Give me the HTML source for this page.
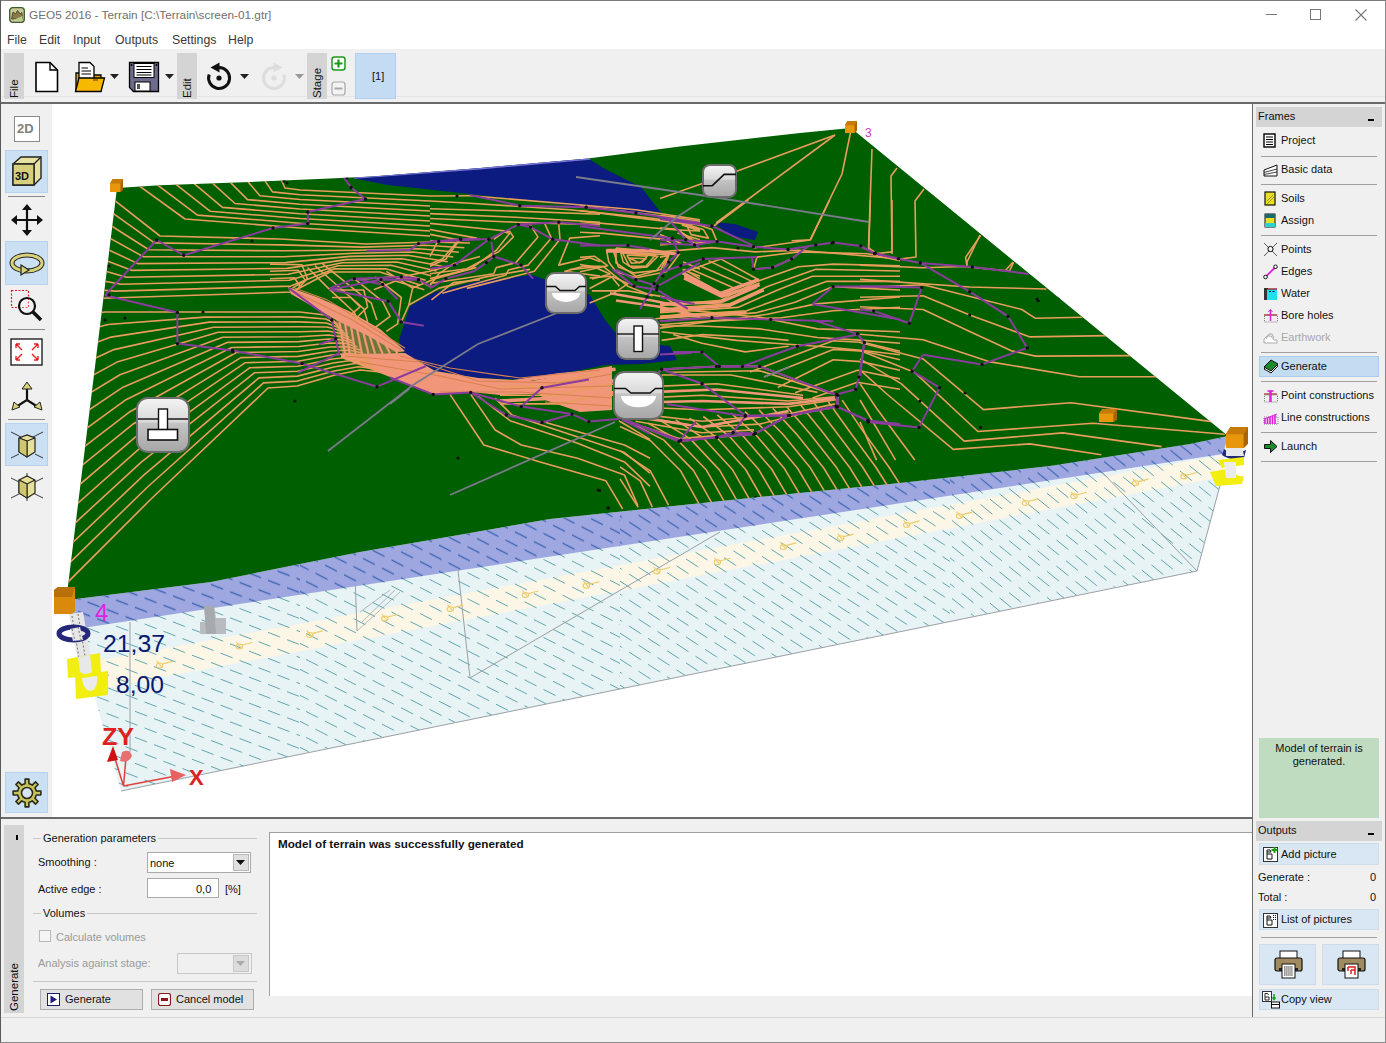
<!DOCTYPE html>
<html><head><meta charset="utf-8">
<style>
*{margin:0;padding:0;box-sizing:border-box}
html,body{width:1386px;height:1043px;overflow:hidden;background:#fff;font-family:"Liberation Sans",sans-serif;color:#000}
.a{position:absolute}
.t{position:absolute;white-space:nowrap;font-size:11px;line-height:13px}
#win{position:absolute;left:0;top:0;width:1386px;height:1043px;background:#f0f0f0;overflow:hidden}
.vtab{position:absolute;background:#d4d4d4}
.vt{position:absolute;transform:rotate(-90deg);transform-origin:0 0;font-size:11.5px;line-height:14px;white-space:nowrap;color:#111}
.pbtn{position:absolute;background:#d9e6f3;border:1px solid #cddcea}
</style></head><body>
<div id="win">
<div class="a" style="left:0;top:0;width:1386px;height:49px;background:#fff"></div>
<svg class="a" style="left:9px;top:7px" width="16" height="16" viewBox="0 0 16 16">
<rect x="0.7" y="0.7" width="14.6" height="14.6" rx="3" fill="#c9c79a" stroke="#3c5a2a" stroke-width="1.3"/>
<path d="M2.5 12 L4 5 L6.5 7 L8.5 3.5 L11 7 L13 5.5 L13.5 12 Z" fill="#8a7a4a" stroke="#3a3a20" stroke-width="0.8"/>
<path d="M4 13 L13.5 9 L13.5 13.5 L4 13.5Z" fill="#b8cc88"/>
</svg>
<div class="t" style="left:29px;top:8px;font-size:11.8px;line-height:14px;color:#707070">GEO5 2016 - Terrain [C:\Terrain\screen-01.gtr]</div>
<div class="t" style="left:7px;top:33px;font-size:12.3px;line-height:15px;color:#3a3a3a">File</div>
<div class="t" style="left:39px;top:33px;font-size:12.3px;line-height:15px;color:#3a3a3a">Edit</div>
<div class="t" style="left:73px;top:33px;font-size:12.3px;line-height:15px;color:#3a3a3a">Input</div>
<div class="t" style="left:115px;top:33px;font-size:12.3px;line-height:15px;color:#3a3a3a">Outputs</div>
<div class="t" style="left:172px;top:33px;font-size:12.3px;line-height:15px;color:#3a3a3a">Settings</div>
<div class="t" style="left:228px;top:33px;font-size:12.3px;line-height:15px;color:#3a3a3a">Help</div>
<div class="a" style="left:1266px;top:14px;width:11px;height:1px;background:#777"></div>
<div class="a" style="left:1310px;top:9px;width:11px;height:11px;border:1px solid #777"></div>
<svg class="a" style="left:1355px;top:9px" width="12" height="12"><path d="M0.5 0.5L11.5 11.5M11.5 0.5L0.5 11.5" stroke="#777" stroke-width="1.1"/></svg>
<div class="a" style="left:0;top:49px;width:1386px;height:54px;background:#f0f0f0"></div>
<div class="a" style="left:0;top:96px;width:1386px;height:1px;background:#e4e4e4"></div>
<div class="a" style="left:0;top:102px;width:1386px;height:2px;background:#6a6a6a"></div>
<div class="vtab" style="left:4px;top:53px;width:20px;height:46px"></div>
<div class="vt" style="left:7px;top:98px">File</div>
<div class="vtab" style="left:177px;top:53px;width:20px;height:46px"></div>
<div class="vt" style="left:180px;top:98px">Edit</div>
<div class="vtab" style="left:307px;top:53px;width:20px;height:46px"></div>
<div class="vt" style="left:310px;top:98px">Stage</div>
<svg class="a" style="left:34px;top:61px" width="26" height="32" viewBox="0 0 26 32">
<path d="M2 1.5 H16 L23.5 9 V30.5 H2 Z" fill="#fff" stroke="#000" stroke-width="1.6"/>
<path d="M16 1.5 V9 H23.5" fill="none" stroke="#000" stroke-width="1.4"/></svg>
<svg class="a" style="left:74px;top:61px" width="32" height="32" viewBox="0 0 32 32">
<path d="M2 12 H10 L12 14 H27 V30 H2 Z" fill="#e2a800" stroke="#000" stroke-width="1.3"/>
<path d="M5 1.5 H16 L20 5.5 V22 H5 Z" fill="#fff" stroke="#000" stroke-width="1.3"/>
<path d="M7.5 7 H14 M7.5 10 H17 M7.5 13 H17" stroke="#000" stroke-width="1.2"/>
<path d="M1.5 30.5 L5 17 H30.5 L27 30.5 Z" fill="#f9b800" stroke="#000" stroke-width="1.3"/>
<path d="M19 19 H24" stroke="#7a5a00" stroke-width="1.4"/>
</svg>
<svg class="a" style="left:110px;top:74px" width="10" height="6"><path d="M0 0H9L4.5 5Z" fill="#222"/></svg>
<svg class="a" style="left:128px;top:61px" width="32" height="32" viewBox="0 0 32 32">
<path d="M1.5 1.5 H30.5 V30.5 H5.5 L1.5 26.5 Z" fill="#6b6b8e" stroke="#000" stroke-width="1.3"/>
<rect x="6" y="2.5" width="20" height="14" fill="#fff" stroke="#000" stroke-width="1"/>
<path d="M8.5 5.5H23.5M8.5 8.5H23.5M8.5 11.5H23.5M8.5 14H23.5" stroke="#000" stroke-width="1.2"/>
<rect x="7" y="21" width="15" height="9" fill="#fff" stroke="#000" stroke-width="1"/>
<rect x="9" y="23" width="3" height="5" fill="#555"/>
<circle cx="3.5" cy="4" r="1" fill="#000"/><circle cx="28.5" cy="4" r="1" fill="#000"/>
</svg>
<svg class="a" style="left:165px;top:74px" width="10" height="6"><path d="M0 0H9L4.5 5Z" fill="#222"/></svg>
<svg class="a" style="left:203px;top:61px" width="32" height="32" viewBox="0 0 32 32">
<path d="M16 6.5 A10.5 10.5 0 1 1 6.2 13.5" fill="none" stroke="#111" stroke-width="3"/>
<path d="M7.5 6.5 L16.5 1.5 V11.5 Z" fill="#111"/>
<circle cx="16" cy="17" r="2.6" fill="#111"/>
</svg>
<svg class="a" style="left:240px;top:74px" width="10" height="6"><path d="M0 0H9L4.5 5Z" fill="#222"/></svg>
<svg class="a" style="left:258px;top:61px" width="32" height="32" viewBox="0 0 32 32" opacity="0.08">
<path d="M16 6.5 A10.5 10.5 0 1 0 25.8 13.5" fill="none" stroke="#111" stroke-width="3"/>
<path d="M24.5 6.5 L15.5 1.5 V11.5 Z" fill="#111"/>
<circle cx="16" cy="17" r="2.6" fill="#111"/>
</svg>
<svg class="a" style="left:295px;top:74px" width="10" height="6"><path d="M0 0H9L4.5 5Z" fill="#999"/></svg>
<svg class="a" style="left:331px;top:56px" width="16" height="16"><rect x="1" y="1" width="13" height="13" rx="2.5" fill="#fff" stroke="#1a9a1a" stroke-width="1.5"/><path d="M7.5 3.5V11.5M3.5 7.5H11.5" stroke="#1a9a1a" stroke-width="2.2"/></svg>
<svg class="a" style="left:331px;top:81px" width="16" height="16"><rect x="1" y="1" width="13" height="13" rx="2.5" fill="#f4f4f4" stroke="#a8a8a8" stroke-width="1.2"/><path d="M3.5 7.5H11.5" stroke="#a8a8a8" stroke-width="2"/></svg>
<div class="a" style="left:355px;top:53px;width:41px;height:46px;background:#c3dcf3;border:1px solid #b0d0ee"></div>
<div class="t" style="left:372px;top:70px;font-size:11px;color:#111">[1]</div>
<div class="a" style="left:1px;top:104px;width:51px;height:714px;background:#f0f0f0"></div>
<div class="a" style="left:14px;top:116px;width:26px;height:26px;background:#fff;border:1px solid #8a8a8a"></div>
<div class="t" style="left:17px;top:122px;font-size:13px;line-height:14px;color:#808080;font-weight:bold">2D</div>
<div class="a" style="left:5px;top:150px;width:43px;height:43px;background:#cce0f4;border:1px solid #b6d2ee"></div>
<div class="a" style="left:5px;top:241px;width:43px;height:44px;background:#cce0f4;border:1px solid #b6d2ee"></div>
<div class="a" style="left:5px;top:423px;width:43px;height:43px;background:#cce0f4;border:1px solid #b6d2ee"></div>
<div class="a" style="left:5px;top:772px;width:43px;height:41px;background:#cce0f4;border:1px solid #b6d2ee"></div>
<div class="a" style="left:8px;top:196px;width:37px;height:1px;background:#8a8a8a"></div>
<div class="a" style="left:8px;top:329px;width:37px;height:1px;background:#8a8a8a"></div>
<div class="a" style="left:8px;top:419px;width:37px;height:1px;background:#8a8a8a"></div>
<svg class="a" style="left:10px;top:154px" width="34" height="34" viewBox="0 0 34 34">
<path d="M3 10 L11 3 H31 V24 L24 31 H3 Z" fill="#e8e2a0" stroke="#222" stroke-width="1.4"/>
<path d="M3 10 H24 V31 M24 10 L31 3" fill="none" stroke="#222" stroke-width="1.4"/>
<path d="M3 10 H24 V31 H3Z" fill="#d6cf7e" stroke="#222" stroke-width="1.4"/>
<text x="5" y="26" font-family="Liberation Sans" font-weight="bold" font-size="11" fill="#111">3D</text>
</svg>
<svg class="a" style="left:10px;top:203px" width="34" height="34" viewBox="0 0 34 34">
<path d="M17 3V31M3 17H31" stroke="#111" stroke-width="2.2"/>
<path d="M17 1 L12 7 H22Z M17 33 L12 27 H22Z M1 17 L7 12 V22Z M33 17 L27 12 V22Z" fill="#111"/>
</svg>
<svg class="a" style="left:9px;top:248px" width="36" height="30" viewBox="0 0 36 30">
<ellipse cx="18" cy="15" rx="15" ry="8" fill="none" stroke="#222" stroke-width="5"/>
<ellipse cx="18" cy="15" rx="15" ry="8" fill="none" stroke="#d8d27a" stroke-width="3"/>
<path d="M12 17 L20 22 L12 27Z" fill="#d8d27a" stroke="#222" stroke-width="1.2"/>
</svg>
<svg class="a" style="left:10px;top:289px" width="36" height="36" viewBox="0 0 36 36">
<rect x="1.5" y="1.5" width="17" height="17" fill="none" stroke="#e02020" stroke-width="1.2" stroke-dasharray="2 1.5"/>
<circle cx="17" cy="17" r="8" fill="#fff" fill-opacity="0.3" stroke="#111" stroke-width="2.2"/>
<path d="M22.5 22.5 L31 31" stroke="#111" stroke-width="3.5"/>
</svg>
<svg class="a" style="left:10px;top:338px" width="34" height="30" viewBox="0 0 34 30">
<rect x="1" y="1" width="31" height="26" fill="#fff" stroke="#222" stroke-width="1.4"/>
<path d="M6 6 L12 12 M6 6 H10 M6 6 V10 M28 6 L22 12 M28 6 H24 M28 6 V10 M6 22 L12 16 M6 22 H10 M6 22 V18 M28 22 L22 16 M28 22 H24 M28 22 V18" stroke="#e02020" stroke-width="1.4" fill="none"/>
</svg>
<svg class="a" style="left:10px;top:381px" width="34" height="30" viewBox="0 0 34 30">
<path d="M17 5 V19 L6 26 M17 19 L28 26" stroke="#111" stroke-width="2.2" fill="none"/>
<path d="M17 1 L12 8 H22Z" fill="#d8d27a" stroke="#222" stroke-width="1"/>
<path d="M2 29 L4 21 L10 26Z M32 29 L30 21 L24 26Z" fill="#d8d27a" stroke="#222" stroke-width="1"/>
</svg>
<svg class="a" style="left:10px;top:428px" width="34" height="34" viewBox="0 0 34 34">
<path d="M1 4 L17 12 L33 4 M1 30 L9 26 M33 30 L25 26" stroke="#222" stroke-width="0.9" fill="none"/>
<path d="M9 10 L17 7 L25 10 V24 L17 29 L9 24Z" fill="#e6e09a" stroke="#222" stroke-width="1.2"/>
<path d="M9 10 L17 13 L25 10 M17 13V29" stroke="#222" stroke-width="1.1" fill="none"/>
<path d="M9 10 L17 13 V29 L9 24Z" fill="#cfc66e" stroke="#222" stroke-width="1"/>
</svg>
<svg class="a" style="left:10px;top:470px" width="34" height="34" viewBox="0 0 34 34">
<path d="M1 8 L9 12 M33 8 L25 12 M1 28 L17 20 L33 28 M17 3 V31" stroke="#222" stroke-width="0.9" fill="none"/>
<path d="M9 10 L17 6 L25 10 V23 L17 28 L9 23Z" fill="#e6e09a" stroke="#222" stroke-width="1.2"/>
<path d="M9 10 L17 14 L25 10 M17 14V28" stroke="#222" stroke-width="1.1" fill="none"/>
<path d="M9 10 L17 14 V28 L9 23Z" fill="#cfc66e" stroke="#222" stroke-width="1"/>
</svg>
<svg class="a" style="left:11px;top:777px" width="32" height="32" viewBox="0 0 32 32"><path d="M12.36 7.22 L14.07 6.70 L14.14 2.12 L17.86 2.12 L17.93 6.70 L19.64 7.22 L21.22 8.06 L24.49 4.87 L27.13 7.51 L23.94 10.78 L24.78 12.36 L25.30 14.07 L29.88 14.14 L29.88 17.86 L25.30 17.93 L24.78 19.64 L23.94 21.22 L27.13 24.49 L24.49 27.13 L21.22 23.94 L19.64 24.78 L17.93 25.30 L17.86 29.88 L14.14 29.88 L14.07 25.30 L12.36 24.78 L10.78 23.94 L7.51 27.13 L4.87 24.49 L8.06 21.22 L7.22 19.64 L6.70 17.93 L2.12 17.86 L2.12 14.14 L6.70 14.07 L7.22 12.36 L8.06 10.78 L4.87 7.51 L7.51 4.87 L10.78 8.06Z" fill="#c8c45a" stroke="#2a2a1a" stroke-width="1.6" stroke-linejoin="round"/><circle cx="16" cy="16" r="5.5" fill="#d8e6f2" stroke="#2a2a1a" stroke-width="1.6"/></svg>
<div class="a" style="left:52px;top:104px;width:1200px;height:713px;background:#fff"></div>
<svg class="a" style="left:52px;top:104px" width="1200" height="713" viewBox="52 104 1200 713">
<defs>
<pattern id="hatchA" patternUnits="userSpaceOnUse" width="19" height="26" patternTransform="skewY(21) translate(2 3)">
<path d="M0 6.5 H12 M9.5 19.5 H21.5 M-9.5 19.5 H2.5" stroke="#62a6ad" stroke-width="1.1"/>
</pattern>
<pattern id="hatchB" patternUnits="userSpaceOnUse" width="19" height="26" patternTransform="skewY(27) translate(2 3)">
<path d="M0 6.5 H12 M9.5 19.5 H21.5 M-9.5 19.5 H2.5" stroke="#62a6ad" stroke-width="1.1"/>
</pattern>
<pattern id="hatchC" patternUnits="userSpaceOnUse" width="19" height="26" patternTransform="skewY(33) translate(2 3)">
<path d="M0 6.5 H12 M9.5 19.5 H21.5 M-9.5 19.5 H2.5" stroke="#62a6ad" stroke-width="1.1"/>
</pattern>
<pattern id="hatchD" patternUnits="userSpaceOnUse" width="19" height="26" patternTransform="skewY(39) translate(2 3)">
<path d="M0 6.5 H12 M9.5 19.5 H21.5 M-9.5 19.5 H2.5" stroke="#62a6ad" stroke-width="1.1"/>
</pattern>
<pattern id="hatchbA" patternUnits="userSpaceOnUse" width="19" height="26" patternTransform="skewY(21) translate(2 3)">
<path d="M0 6.5 H12 M9.5 19.5 H21.5 M-9.5 19.5 H2.5" stroke="#3d66b4" stroke-width="1.3"/>
</pattern>
<pattern id="hatchbB" patternUnits="userSpaceOnUse" width="19" height="26" patternTransform="skewY(27) translate(2 3)">
<path d="M0 6.5 H12 M9.5 19.5 H21.5 M-9.5 19.5 H2.5" stroke="#3d66b4" stroke-width="1.3"/>
</pattern>
<pattern id="hatchbC" patternUnits="userSpaceOnUse" width="19" height="26" patternTransform="skewY(33) translate(2 3)">
<path d="M0 6.5 H12 M9.5 19.5 H21.5 M-9.5 19.5 H2.5" stroke="#3d66b4" stroke-width="1.3"/>
</pattern>
<pattern id="hatchbD" patternUnits="userSpaceOnUse" width="19" height="26" patternTransform="skewY(39) translate(2 3)">
<path d="M0 6.5 H12 M9.5 19.5 H21.5 M-9.5 19.5 H2.5" stroke="#3d66b4" stroke-width="1.3"/>
</pattern>
<clipPath id="zA"><rect x="0" y="0" width="300" height="1043"/></clipPath>
<clipPath id="zB"><rect x="300" y="0" width="320" height="1043"/></clipPath>
<clipPath id="zC"><rect x="620" y="0" width="330" height="1043"/></clipPath>
<clipPath id="zD"><rect x="950" y="0" width="500" height="1043"/></clipPath>
<clipPath id="gclip"><polygon points="117.0,188.0 160.0,185.3 250.0,182.0 330.0,178.5 372.0,176.5 480.0,168.0 588.0,158.4 680.0,146.4 800.0,133.0 851.0,128.0 1228.0,436.0 1190.0,444.0 1050.0,466.0 900.0,483.0 750.0,498.0 550.0,519.0 430.0,540.0 360.0,552.0 211.0,582.0 76.0,599.0 66.0,602.0"/></clipPath>
<clipPath id="lclip"><polygon points="66.0,602.0 1228.0,437.0 1225.0,456.0 1222.0,478.0 1197.0,571.0 121.0,791.0 76.0,630.0"/></clipPath>
<linearGradient id="ig" x1="0" y1="0" x2="0" y2="1"><stop offset="0" stop-color="#f4f4f4"/><stop offset="0.45" stop-color="#d8d8d8"/><stop offset="0.46" stop-color="#c4c4c4"/><stop offset="1" stop-color="#a6a6a6"/></linearGradient>
</defs>
<polygon points="66.0,602.0 1228.0,437.0 1225.0,456.0 1222.0,478.0 1197.0,571.0 121.0,791.0 76.0,630.0" fill="#e7f3f5"/>
<g clip-path="url(#lclip)"><polygon points="80.0,664.0 1222.0,455.0 1222.0,477.0 84.0,692.0" fill="#fcf6e6"/></g>
<g clip-path="url(#zA)"><polygon points="66.0,602.0 1228.0,437.0 1225.0,456.0 1222.0,478.0 1197.0,571.0 121.0,791.0 76.0,630.0" fill="url(#hatchA)"/></g>
<g clip-path="url(#zB)"><polygon points="66.0,602.0 1228.0,437.0 1225.0,456.0 1222.0,478.0 1197.0,571.0 121.0,791.0 76.0,630.0" fill="url(#hatchB)"/></g>
<g clip-path="url(#zC)"><polygon points="66.0,602.0 1228.0,437.0 1225.0,456.0 1222.0,478.0 1197.0,571.0 121.0,791.0 76.0,630.0" fill="url(#hatchC)"/></g>
<g clip-path="url(#zD)"><polygon points="66.0,602.0 1228.0,437.0 1225.0,456.0 1222.0,478.0 1197.0,571.0 121.0,791.0 76.0,630.0" fill="url(#hatchD)"/></g>
<path d="M121 791 L1197 571 L1222 478 M1102 472 L1197 571 M130 622 L130 752 M355 575 L357 631 M458 570 L470 678 L720 532" fill="none" stroke="#9aa0a6" stroke-width="1"/>
<path d="M357 631 L400 592 M362 622 L395 590 M360 612 L390 590" stroke="#a0a8ad" stroke-width="0.8"/>
<polygon points="1228.0,436.0 1190.0,444.0 1050.0,466.0 900.0,483.0 750.0,498.0 550.0,519.0 430.0,540.0 360.0,552.0 211.0,582.0 76.0,599.0 66.0,602.0 76.0,629.0 1223.0,454.0" fill="#9fa7e0"/>
<g clip-path="url(#zA)"><polygon points="1228.0,436.0 1190.0,444.0 1050.0,466.0 900.0,483.0 750.0,498.0 550.0,519.0 430.0,540.0 360.0,552.0 211.0,582.0 76.0,599.0 66.0,602.0 76.0,629.0 1223.0,454.0" fill="url(#hatchbA)"/></g>
<g clip-path="url(#zB)"><polygon points="1228.0,436.0 1190.0,444.0 1050.0,466.0 900.0,483.0 750.0,498.0 550.0,519.0 430.0,540.0 360.0,552.0 211.0,582.0 76.0,599.0 66.0,602.0 76.0,629.0 1223.0,454.0" fill="url(#hatchbB)"/></g>
<g clip-path="url(#zC)"><polygon points="1228.0,436.0 1190.0,444.0 1050.0,466.0 900.0,483.0 750.0,498.0 550.0,519.0 430.0,540.0 360.0,552.0 211.0,582.0 76.0,599.0 66.0,602.0 76.0,629.0 1223.0,454.0" fill="url(#hatchbC)"/></g>
<g clip-path="url(#zD)"><polygon points="1228.0,436.0 1190.0,444.0 1050.0,466.0 900.0,483.0 750.0,498.0 550.0,519.0 430.0,540.0 360.0,552.0 211.0,582.0 76.0,599.0 66.0,602.0 76.0,629.0 1223.0,454.0" fill="url(#hatchbD)"/></g>
<polygon points="117.0,188.0 160.0,185.3 250.0,182.0 330.0,178.5 372.0,176.5 480.0,168.0 588.0,158.4 680.0,146.4 800.0,133.0 851.0,128.0 1228.0,436.0 1190.0,444.0 1050.0,466.0 900.0,483.0 750.0,498.0 550.0,519.0 430.0,540.0 360.0,552.0 211.0,582.0 76.0,599.0 66.0,602.0" fill="#005f00"/>
<g clip-path="url(#gclip)">
<polygon points="352.0,178.0 480.0,168.0 588.0,158.4 605.0,169.0 641.0,187.0 662.0,214.0 605.0,210.0 532.0,201.0 470.0,194.0 388.0,185.0" fill="#0b1b80"/>
<path d="M354 177.2 L480 168 L590 158.2" fill="none" stroke="#7a74d8" stroke-width="3"/>
<polygon points="399.0,340.0 410.0,306.0 435.0,292.0 478.0,281.0 532.0,275.0 590.0,295.0 605.0,320.0 623.0,342.0 670.0,346.0 677.0,360.0 641.0,364.0 605.0,365.0 532.0,380.0 478.0,378.0 435.0,371.0 403.0,353.0" fill="#0b1b80"/>
<polygon points="714.0,222.0 735.0,224.0 758.0,232.0 755.0,240.0 730.0,236.0" fill="#0b1b80"/>
<polygon points="288.0,287.0 317.0,297.0 349.0,311.0 380.0,329.0 405.0,351.0 396.0,352.0 372.0,338.0 336.0,320.0 317.0,309.0 291.0,294.0" fill="#f2967a"/>
<polygon points="336.0,320.0 349.0,312.0 380.0,330.0 405.0,352.0 343.0,355.0 338.0,342.0" fill="#f2967a" fill-opacity="0.45"/>
<polygon points="341.0,354.0 405.0,353.0 435.0,371.0 478.0,378.0 532.0,381.0 577.0,372.0 612.0,366.0 612.0,392.0 560.0,393.0 500.0,395.0 471.0,392.0 433.0,394.0 390.0,377.0 341.0,358.0" fill="#f2967a"/>
<polygon points="535.0,390.0 560.0,378.0 612.0,368.0 612.0,410.0 580.0,412.0 545.0,400.0" fill="#f2967a"/>
<path d="M430.0 196.0 L470.0 195.7" fill="none" stroke="#e99d5c" stroke-width="1.6" stroke-linejoin="round"/>
<path d="M430.0 201.0 L470.0 203.2" fill="none" stroke="#e99d5c" stroke-width="1.6" stroke-linejoin="round"/>
<path d="M276.0 168.0 L285.0 188.0 L300.0 190.0 L430.0 196.0" fill="none" stroke="#e99d5c" stroke-width="1.6" stroke-linejoin="round"/>
<path d="M256.5 168.5 L272.5 191.9 L300.0 194.8 L430.0 201.0" fill="none" stroke="#e99d5c" stroke-width="1.6" stroke-linejoin="round"/>
<path d="M237.0 169.0 L260.0 195.8 L300.0 199.5 L430.0 206.0" fill="none" stroke="#e99d5c" stroke-width="1.6" stroke-linejoin="round"/>
<path d="M217.5 169.5 L247.5 199.6 L300.0 204.2 L430.0 211.0" fill="none" stroke="#e99d5c" stroke-width="1.6" stroke-linejoin="round"/>
<path d="M198.0 170.0 L235.0 203.5 L300.0 209.0 L430.0 216.0" fill="none" stroke="#e99d5c" stroke-width="1.6" stroke-linejoin="round"/>
<path d="M178.5 170.5 L222.5 207.4 L300.0 213.8 L430.0 221.0" fill="none" stroke="#e99d5c" stroke-width="1.6" stroke-linejoin="round"/>
<path d="M159.0 171.0 L210.0 211.2 L300.0 218.5 L430.0 226.0" fill="none" stroke="#e99d5c" stroke-width="1.6" stroke-linejoin="round"/>
<path d="M139.5 171.5 L197.5 215.1 L300.0 223.2 L430.0 231.0" fill="none" stroke="#e99d5c" stroke-width="1.6" stroke-linejoin="round"/>
<path d="M120.0 172.0 L185.0 219.0 L300.0 228.0 L430.0 236.0" fill="none" stroke="#e99d5c" stroke-width="1.6" stroke-linejoin="round"/>
<path d="M95.0 185.0 L160.0 236.0 L280.0 239.0 L366.0 244.0 L430.0 242.0 L470.0 243.0" fill="none" stroke="#e99d5c" stroke-width="1.6" stroke-linejoin="round"/>
<path d="M91.1 197.8 L154.4 242.9 L281.3 244.9 L362.0 247.1 L424.4 245.3 L464.4 247.7" fill="none" stroke="#e99d5c" stroke-width="1.6" stroke-linejoin="round"/>
<path d="M87.2 210.6 L148.9 249.8 L282.7 250.8 L358.0 250.2 L418.9 248.7 L458.9 252.3" fill="none" stroke="#e99d5c" stroke-width="1.6" stroke-linejoin="round"/>
<path d="M83.3 223.3 L143.3 256.7 L284.0 256.7 L354.0 253.3 L413.3 252.0 L453.3 257.0" fill="none" stroke="#e99d5c" stroke-width="1.6" stroke-linejoin="round"/>
<path d="M79.4 236.1 L137.8 263.6 L285.3 262.6 L350.0 256.4 L407.8 255.3 L447.8 261.7" fill="none" stroke="#e99d5c" stroke-width="1.6" stroke-linejoin="round"/>
<path d="M75.6 248.9 L132.2 270.4 L286.7 268.4 L346.0 259.6 L402.2 258.7 L442.2 266.3" fill="none" stroke="#e99d5c" stroke-width="1.6" stroke-linejoin="round"/>
<path d="M71.7 261.7 L126.7 277.3 L288.0 274.3 L342.0 262.7 L396.7 262.0 L436.7 271.0" fill="none" stroke="#e99d5c" stroke-width="1.6" stroke-linejoin="round"/>
<path d="M67.8 274.4 L121.1 284.2 L289.3 280.2 L338.0 265.8 L391.1 265.3 L431.1 275.7" fill="none" stroke="#e99d5c" stroke-width="1.6" stroke-linejoin="round"/>
<path d="M63.9 287.2 L115.6 291.1 L290.7 286.1 L334.0 268.9 L385.6 268.7 L425.6 280.3" fill="none" stroke="#e99d5c" stroke-width="1.6" stroke-linejoin="round"/>
<path d="M60.0 300.0 L110.0 298.0 L292.0 292.0 L330.0 272.0 L380.0 272.0 L420.0 285.0" fill="none" stroke="#e99d5c" stroke-width="1.6" stroke-linejoin="round"/>
<path d="M60.0 318.0 L105.0 312.0 L200.0 312.0 L300.0 312.0 L325.0 315.0 L333.0 320.0 L338.0 325.0" fill="none" stroke="#e99d5c" stroke-width="1.6" stroke-linejoin="round"/>
<path d="M58.7 337.5 L108.0 324.5 L204.5 317.1 L299.8 316.9 L325.7 319.0 L334.8 323.3 L340.8 328.1" fill="none" stroke="#e99d5c" stroke-width="1.6" stroke-linejoin="round"/>
<path d="M57.3 356.9 L111.0 337.1 L209.1 322.1 L299.6 321.9 L326.3 323.0 L336.6 326.7 L343.6 331.3" fill="none" stroke="#e99d5c" stroke-width="1.6" stroke-linejoin="round"/>
<path d="M56.0 376.4 L114.0 349.6 L213.6 327.2 L299.4 326.8 L327.0 327.0 L338.4 330.0 L346.4 334.4" fill="none" stroke="#e99d5c" stroke-width="1.6" stroke-linejoin="round"/>
<path d="M54.7 395.9 L117.0 362.1 L218.1 332.3 L299.2 331.7 L327.7 331.0 L340.2 333.3 L349.2 337.5" fill="none" stroke="#e99d5c" stroke-width="1.6" stroke-linejoin="round"/>
<path d="M53.3 415.3 L120.0 374.7 L222.7 337.3 L299.0 336.7 L328.3 335.0 L342.0 336.7 L352.0 340.7" fill="none" stroke="#e99d5c" stroke-width="1.6" stroke-linejoin="round"/>
<path d="M52.0 434.8 L123.0 387.2 L227.2 342.4 L298.8 341.6 L329.0 339.0 L343.8 340.0 L354.8 343.8" fill="none" stroke="#e99d5c" stroke-width="1.6" stroke-linejoin="round"/>
<path d="M50.7 454.3 L126.0 399.7 L231.7 347.5 L298.6 346.5 L329.7 343.0 L345.6 343.3 L357.6 346.9" fill="none" stroke="#e99d5c" stroke-width="1.6" stroke-linejoin="round"/>
<path d="M49.3 473.7 L129.0 412.3 L236.3 352.5 L298.4 351.5 L330.3 347.0 L347.4 346.7 L360.4 350.1" fill="none" stroke="#e99d5c" stroke-width="1.6" stroke-linejoin="round"/>
<path d="M48.0 493.2 L132.0 424.8 L240.8 357.6 L298.2 356.4 L331.0 351.0 L349.2 350.0 L363.2 353.2" fill="none" stroke="#e99d5c" stroke-width="1.6" stroke-linejoin="round"/>
<path d="M46.7 512.7 L135.0 437.3 L245.3 362.7 L298.0 361.3 L331.7 355.0 L351.0 353.3 L366.0 356.3" fill="none" stroke="#e99d5c" stroke-width="1.6" stroke-linejoin="round"/>
<path d="M45.3 532.1 L138.0 449.9 L249.9 367.7 L297.8 366.3 L332.3 359.0 L352.8 356.7 L368.8 359.5" fill="none" stroke="#e99d5c" stroke-width="1.6" stroke-linejoin="round"/>
<path d="M44.0 551.6 L141.0 462.4 L254.4 372.8 L297.6 371.2 L333.0 363.0 L354.6 360.0 L371.6 362.6" fill="none" stroke="#e99d5c" stroke-width="1.6" stroke-linejoin="round"/>
<path d="M42.7 571.1 L144.0 474.9 L258.9 377.9 L297.4 376.1 L333.7 367.0 L356.4 363.3 L374.4 365.7" fill="none" stroke="#e99d5c" stroke-width="1.6" stroke-linejoin="round"/>
<path d="M41.3 590.5 L147.0 487.5 L263.5 382.9 L297.2 381.1 L334.3 371.0 L358.2 366.7 L377.2 368.9" fill="none" stroke="#e99d5c" stroke-width="1.6" stroke-linejoin="round"/>
<path d="M40.0 610.0 L150.0 500.0 L268.0 388.0 L297.0 386.0 L335.0 375.0 L360.0 370.0 L380.0 372.0" fill="none" stroke="#e99d5c" stroke-width="1.6" stroke-linejoin="round"/>
<path d="M352.2 279.7 L395.4 276.8 L418.5 279.7 L430.1 286.9" fill="none" stroke="#e99d5c" stroke-width="1.6" stroke-linejoin="round"/>
<path d="M373.8 289.8 L395.4 281.1 L424.3 289.8" fill="none" stroke="#e99d5c" stroke-width="1.6" stroke-linejoin="round"/>
<path d="M431.5 299.9 L453.2 282.6 L480.0 279.7" fill="none" stroke="#e99d5c" stroke-width="1.6" stroke-linejoin="round"/>
<path d="M480.0 256.6 L453.2 263.8 L438.7 273.9 L430.1 285.4" fill="none" stroke="#e99d5c" stroke-width="1.6" stroke-linejoin="round"/>
<path d="M835.0 135.0 L736.0 171.5 L660.0 198.5" fill="none" stroke="#e99d5c" stroke-width="1.6" stroke-linejoin="round"/>
<path d="M835.0 135.0 L716.0 223.0" fill="none" stroke="#e99d5c" stroke-width="1.6" stroke-linejoin="round"/>
<path d="M851.0 130.0 L842.0 174.0 L810.0 240.0 L753.0 248.0" fill="none" stroke="#e99d5c" stroke-width="1.6" stroke-linejoin="round"/>
<path d="M872.0 149.0 L868.5 247.6 L876.0 254.0" fill="none" stroke="#e99d5c" stroke-width="1.6" stroke-linejoin="round"/>
<path d="M897.0 168.0 L891.0 176.0 L892.0 254.0" fill="none" stroke="#e99d5c" stroke-width="1.6" stroke-linejoin="round"/>
<path d="M924.0 189.0 L915.0 201.0 L916.0 257.0 L900.0 259.0" fill="none" stroke="#e99d5c" stroke-width="1.6" stroke-linejoin="round"/>
<path d="M980.0 235.0 L967.0 262.0 L967.0 267.0" fill="none" stroke="#e99d5c" stroke-width="1.6" stroke-linejoin="round"/>
<path d="M1013.0 262.0 L1005.0 271.0" fill="none" stroke="#e99d5c" stroke-width="1.6" stroke-linejoin="round"/>
<path d="M980.6 235.5 L965.6 257.4 L966.9 265.6" fill="none" stroke="#e99d5c" stroke-width="1.6" stroke-linejoin="round"/>
<path d="M860.0 265.1 L923.1 267.8 L964.2 266.5 L1009.4 271.1 L1013.6 262.4" fill="none" stroke="#e99d5c" stroke-width="1.6" stroke-linejoin="round"/>
<path d="M860.0 279.4 L969.7 287.0 L1046.5 289.0" fill="none" stroke="#e99d5c" stroke-width="1.6" stroke-linejoin="round"/>
<path d="M1082.1 317.2 L1035.5 318.3 L1021.8 309.5 L923.1 284.8 L860.0 287.6" fill="none" stroke="#e99d5c" stroke-width="1.6" stroke-linejoin="round"/>
<path d="M1106.8 335.6 L1030.0 336.9 L969.7 315.0 L923.1 295.8 L860.0 297.2" fill="none" stroke="#e99d5c" stroke-width="1.6" stroke-linejoin="round"/>
<path d="M1131.5 355.6 L1035.5 356.1 L1010.8 350.6 L969.7 331.5 L923.1 309.5 L860.0 306.8" fill="none" stroke="#e99d5c" stroke-width="1.6" stroke-linejoin="round"/>
<path d="M1158.9 376.7 L1079.4 376.7 L988.9 361.6 L923.1 339.7 L860.0 334.2" fill="none" stroke="#e99d5c" stroke-width="1.6" stroke-linejoin="round"/>
<path d="M1213.7 421.9 L1071.1 402.7 L983.4 409.6 L923.1 358.9 L860.0 342.4" fill="none" stroke="#e99d5c" stroke-width="1.6" stroke-linejoin="round"/>
<path d="M1224.7 434.3 L1093.1 423.3 L977.9 431.5 L914.8 372.6 L860.0 350.6" fill="none" stroke="#e99d5c" stroke-width="1.6" stroke-linejoin="round"/>
<path d="M1161.6 446.6 L1062.9 432.9 L964.2 441.1 L901.1 383.6 L860.0 358.9" fill="none" stroke="#e99d5c" stroke-width="1.6" stroke-linejoin="round"/>
<path d="M1101.3 454.8 L1030.0 443.9 L953.2 449.4 L887.4 394.5 L860.0 369.8" fill="none" stroke="#e99d5c" stroke-width="1.6" stroke-linejoin="round"/>
<path d="M860.0 383.6 L876.5 408.2 L914.8 460.1" fill="none" stroke="#e99d5c" stroke-width="1.6" stroke-linejoin="round"/>
<path d="M860.0 400.0 L895.6 460.1" fill="none" stroke="#e99d5c" stroke-width="1.6" stroke-linejoin="round"/>
<path d="M860.0 421.9 L876.5 460.1" fill="none" stroke="#e99d5c" stroke-width="1.6" stroke-linejoin="round"/>
<path d="M620.0 426.4 L650.3 440.5 L680.6 470.8 L700.8 507.2" fill="none" stroke="#e99d5c" stroke-width="1.6" stroke-linejoin="round"/>
<path d="M633.9 424.7 L663.6 439.9 L693.6 470.6 L713.7 506.4" fill="none" stroke="#e99d5c" stroke-width="1.6" stroke-linejoin="round"/>
<path d="M647.8 423.1 L676.8 439.2 L706.6 470.3 L726.6 505.7" fill="none" stroke="#e99d5c" stroke-width="1.6" stroke-linejoin="round"/>
<path d="M661.7 421.4 L690.1 438.6 L719.6 470.1 L739.4 504.9" fill="none" stroke="#e99d5c" stroke-width="1.6" stroke-linejoin="round"/>
<path d="M675.6 419.8 L703.3 438.0 L732.6 469.8 L752.3 504.1" fill="none" stroke="#e99d5c" stroke-width="1.6" stroke-linejoin="round"/>
<path d="M689.4 418.2 L716.6 437.3 L745.6 469.5 L765.2 503.4" fill="none" stroke="#e99d5c" stroke-width="1.6" stroke-linejoin="round"/>
<path d="M703.3 416.5 L729.8 436.7 L758.6 469.3 L778.1 502.6" fill="none" stroke="#e99d5c" stroke-width="1.6" stroke-linejoin="round"/>
<path d="M717.2 414.9 L743.1 436.1 L771.6 469.0 L791.0 501.9" fill="none" stroke="#e99d5c" stroke-width="1.6" stroke-linejoin="round"/>
<path d="M731.1 413.2 L756.4 435.5 L784.6 468.8 L803.8 501.1" fill="none" stroke="#e99d5c" stroke-width="1.6" stroke-linejoin="round"/>
<path d="M745.0 411.6 L769.6 434.8 L797.7 468.5 L816.7 500.4" fill="none" stroke="#e99d5c" stroke-width="1.6" stroke-linejoin="round"/>
<path d="M758.9 409.9 L782.9 434.2 L810.7 468.3 L829.6 499.6" fill="none" stroke="#e99d5c" stroke-width="1.6" stroke-linejoin="round"/>
<path d="M772.8 408.3 L796.1 433.6 L823.7 468.0 L842.5 498.8" fill="none" stroke="#e99d5c" stroke-width="1.6" stroke-linejoin="round"/>
<path d="M786.7 406.7 L809.4 432.9 L836.7 467.8 L855.4 498.1" fill="none" stroke="#e99d5c" stroke-width="1.6" stroke-linejoin="round"/>
<path d="M800.6 405.0 L822.7 432.3 L849.7 467.5 L868.2 497.3" fill="none" stroke="#e99d5c" stroke-width="1.6" stroke-linejoin="round"/>
<path d="M814.4 403.4 L835.9 431.7 L862.7 467.3 L881.1 496.6" fill="none" stroke="#e99d5c" stroke-width="1.6" stroke-linejoin="round"/>
<path d="M828.3 401.7 L849.2 431.0 L875.7 467.0 L894.0 495.8" fill="none" stroke="#e99d5c" stroke-width="1.6" stroke-linejoin="round"/>
<path d="M842.2 400.1 L862.4 430.4 L888.7 466.8 L906.9 495.1" fill="none" stroke="#e99d5c" stroke-width="1.6" stroke-linejoin="round"/>
<path d="M620.0 450.6 L650.3 470.8 L668.5 505.2" fill="none" stroke="#e99d5c" stroke-width="1.6" stroke-linejoin="round"/>
<path d="M620.0 466.8 L640.2 480.9 L652.3 507.2" fill="none" stroke="#e99d5c" stroke-width="1.6" stroke-linejoin="round"/>
<path d="M620.0 478.9 L638.2 507.2" fill="none" stroke="#e99d5c" stroke-width="1.6" stroke-linejoin="round"/>
<path d="M450.0 394.4 L483.8 445.0 L540.1 461.9 L605.8 480.7 L622.6 508.8" fill="none" stroke="#e99d5c" stroke-width="1.6" stroke-linejoin="round"/>
<path d="M470.7 394.4 L495.1 430.0 L521.3 445.0 L577.6 458.2 L624.5 475.1 L637.7 505.1" fill="none" stroke="#e99d5c" stroke-width="1.6" stroke-linejoin="round"/>
<path d="M478.2 396.3 L510.1 420.7 L577.6 443.2 L624.5 461.9 L650.0 486.3" fill="none" stroke="#e99d5c" stroke-width="1.6" stroke-linejoin="round"/>
<path d="M495.1 398.1 L512.0 415.0 L540.1 424.4 L624.5 452.6 L650.0 473.2" fill="none" stroke="#e99d5c" stroke-width="1.6" stroke-linejoin="round"/>
<path d="M545.7 422.5 L624.5 445.0 L650.0 458.2" fill="none" stroke="#e99d5c" stroke-width="1.6" stroke-linejoin="round"/>
<path d="M618.9 420.7 L650.0 439.4" fill="none" stroke="#e99d5c" stroke-width="1.6" stroke-linejoin="round"/>
<path d="M470.0 195.7 L569.6 204.0 L635.9 209.8 L700.0 219.8" fill="none" stroke="#e99d5c" stroke-width="1.6" stroke-linejoin="round"/>
<path d="M470.0 203.2 L569.6 209.8 L644.2 217.3 L700.0 224.8" fill="none" stroke="#e99d5c" stroke-width="1.6" stroke-linejoin="round"/>
<path d="M616.0 248.0 L669.1 253.0 L660.8 269.6 L635.9 276.2 L616.0 262.9 L616.0 248.0" fill="none" stroke="#e99d5c" stroke-width="1.6" stroke-linejoin="round"/>
<path d="M622.7 253.0 L655.9 254.6 L645.9 266.2 L629.3 266.2 L622.7 253.0" fill="none" stroke="#e99d5c" stroke-width="1.6" stroke-linejoin="round"/>
<path d="M629.3 258.0 L645.9 258.8 L639.3 262.9 L629.3 258.0" fill="none" stroke="#e99d5c" stroke-width="1.6" stroke-linejoin="round"/>
<path d="M569.6 269.6 L602.8 266.2 L627.7 286.2 L652.5 296.1" fill="none" stroke="#e99d5c" stroke-width="1.6" stroke-linejoin="round"/>
<path d="M589.5 277.9 L611.1 276.2 L619.4 286.2" fill="none" stroke="#e99d5c" stroke-width="1.6" stroke-linejoin="round"/>
<path d="M669.1 219.8 L700.0 229.7" fill="none" stroke="#e99d5c" stroke-width="1.6" stroke-linejoin="round"/>
<path d="M677.4 233.1 L700.0 239.7" fill="none" stroke="#e99d5c" stroke-width="1.6" stroke-linejoin="round"/>
<path d="M682.4 269.6 L700.0 276.2" fill="none" stroke="#e99d5c" stroke-width="1.6" stroke-linejoin="round"/>
<path d="M684.1 277.9 L700.0 286.2" fill="none" stroke="#e99d5c" stroke-width="1.6" stroke-linejoin="round"/>
<path d="M430.0 208.7 L515.9 211.1 L600.0 214.2" fill="none" stroke="#e99d5c" stroke-width="1.6" stroke-linejoin="round"/>
<path d="M430.0 213.6 L515.9 217.3 L600.0 222.2" fill="none" stroke="#e99d5c" stroke-width="1.6" stroke-linejoin="round"/>
<path d="M430.0 218.5 L515.9 222.2 L552.7 223.4 L600.0 224.6" fill="none" stroke="#e99d5c" stroke-width="1.6" stroke-linejoin="round"/>
<path d="M430.0 223.4 L491.3 229.5 L509.7 231.4 L513.4 236.9 L498.7 251.6 L466.8 268.8 L430.0 273.7" fill="none" stroke="#e99d5c" stroke-width="1.6" stroke-linejoin="round"/>
<path d="M430.0 229.5 L476.6 238.1 L458.2 240.6 L442.3 259.0 L430.0 263.9" fill="none" stroke="#e99d5c" stroke-width="1.6" stroke-linejoin="round"/>
<path d="M430.0 234.4 L459.4 240.0 L445.9 259.0 L430.0 266.3" fill="none" stroke="#e99d5c" stroke-width="1.6" stroke-linejoin="round"/>
<path d="M430.0 240.6 L437.4 241.8 L430.0 256.5" fill="none" stroke="#e99d5c" stroke-width="1.6" stroke-linejoin="round"/>
<path d="M529.3 223.4 L537.9 236.9 L515.9 262.6 L496.2 267.6 L493.8 273.7 L430.0 283.5" fill="none" stroke="#e99d5c" stroke-width="1.6" stroke-linejoin="round"/>
<path d="M544.1 222.2 L551.4 238.1 L528.1 265.1 L508.5 270.0 L506.0 274.9 L442.3 293.3" fill="none" stroke="#e99d5c" stroke-width="1.6" stroke-linejoin="round"/>
<path d="M558.8 224.6 L560.0 239.3 L534.3 271.2 L515.9 276.1 L466.8 288.4" fill="none" stroke="#e99d5c" stroke-width="1.6" stroke-linejoin="round"/>
<path d="M600.0 235.7 L569.8 238.1 L558.8 265.1 L589.5 257.7 L600.0 261.4" fill="none" stroke="#e99d5c" stroke-width="1.6" stroke-linejoin="round"/>
<path d="M600.0 266.3 L583.3 266.3 L564.9 271.2 L600.0 276.1" fill="none" stroke="#e99d5c" stroke-width="1.6" stroke-linejoin="round"/>
<path d="M493.8 239.3 L503.6 232.0 L509.7 233.2 L496.2 250.4 L470.5 268.8 L430.0 278.6" fill="none" stroke="#e99d5c" stroke-width="1.6" stroke-linejoin="round"/>
<path d="M748.3 200.0 L713.7 226.0" fill="none" stroke="#e99d5c" stroke-width="1.6" stroke-linejoin="round"/>
<path d="M829.7 200.0 L810.6 239.8 L791.6 240.7" fill="none" stroke="#e99d5c" stroke-width="1.6" stroke-linejoin="round"/>
<path d="M870.4 200.0 L868.7 248.5 L874.7 251.9" fill="none" stroke="#e99d5c" stroke-width="1.6" stroke-linejoin="round"/>
<path d="M892.0 200.0 L892.0 251.9 L874.7 253.7" fill="none" stroke="#e99d5c" stroke-width="1.6" stroke-linejoin="round"/>
<path d="M660.0 251.9 L711.9 247.6 L755.2 251.9 L798.5 250.2 L900.0 258.9" fill="none" stroke="#e99d5c" stroke-width="1.6" stroke-linejoin="round"/>
<path d="M757.0 257.1 L798.5 251.9 L867.8 253.7 L900.0 260.6" fill="none" stroke="#e99d5c" stroke-width="1.6" stroke-linejoin="round"/>
<path d="M682.5 272.7 L720.6 293.5 L758.7 279.7 L720.6 258.9 L682.5 272.7" fill="none" stroke="#e99d5c" stroke-width="1.6" stroke-linejoin="round"/>
<path d="M691.2 269.3 L734.5 288.3" fill="none" stroke="#e99d5c" stroke-width="1.6" stroke-linejoin="round"/>
<path d="M699.8 265.8 L743.1 284.8" fill="none" stroke="#e99d5c" stroke-width="1.6" stroke-linejoin="round"/>
<path d="M708.5 260.6 L751.8 281.4" fill="none" stroke="#e99d5c" stroke-width="1.6" stroke-linejoin="round"/>
<path d="M684.2 276.2 L722.3 297.0 L759.6 283.1" fill="none" stroke="#e99d5c" stroke-width="1.6" stroke-linejoin="round"/>
<path d="M660.0 215.6 L677.3 217.3 L711.9 229.4 L717.1 241.6 L694.6 243.3 L677.3 229.4 L660.0 227.7" fill="none" stroke="#e99d5c" stroke-width="1.6" stroke-linejoin="round"/>
<path d="M686.0 224.2 L703.3 229.4 L708.5 238.1 L691.2 234.6 L686.0 224.2" fill="none" stroke="#e99d5c" stroke-width="1.6" stroke-linejoin="round"/>
<path d="M660.0 234.6 L680.8 243.3 L660.0 245.0" fill="none" stroke="#e99d5c" stroke-width="1.6" stroke-linejoin="round"/>
<path d="M660.0 257.1 L668.7 255.4 L663.5 269.3" fill="none" stroke="#e99d5c" stroke-width="1.6" stroke-linejoin="round"/>
<path d="M757.0 257.1 L753.5 269.3 L772.6 267.5 L791.6 258.9 L807.2 246.8" fill="none" stroke="#e99d5c" stroke-width="1.6" stroke-linejoin="round"/>
<path d="M660.0 303.9 L720.6 302.2 L757.0 286.6" fill="none" stroke="#f2967a" stroke-width="3" stroke-linejoin="round"/>
<path d="M660.0 310.8 L729.3 305.6 L763.9 290.0" fill="none" stroke="#f2967a" stroke-width="3" stroke-linejoin="round"/>
<path d="M660.0 317.7 L711.9 314.3 L746.6 312.6" fill="none" stroke="#f2967a" stroke-width="3" stroke-linejoin="round"/>
<path d="M682.5 272.7 L720.6 293.5 L758.7 279.7" fill="none" stroke="#f2967a" stroke-width="3.5" stroke-linejoin="round"/>
<path d="M684.2 277.9 L721.5 296.1 L759.6 284.8" fill="none" stroke="#f2967a" stroke-width="3.5" stroke-linejoin="round"/>
<path d="M900.0 265.8 L833.2 264.1 L798.5 266.7 L757.0 281.4 L720.6 300.4 L660.0 305.6" fill="none" stroke="#e99d5c" stroke-width="1.6" stroke-linejoin="round"/>
<path d="M900.0 271.0 L815.8 269.3 L767.4 286.6 L729.3 303.9 L660.0 309.1" fill="none" stroke="#e99d5c" stroke-width="1.6" stroke-linejoin="round"/>
<path d="M900.0 276.2 L812.4 276.2 L777.7 290.0 L737.9 307.4 L660.0 312.6" fill="none" stroke="#e99d5c" stroke-width="1.6" stroke-linejoin="round"/>
<path d="M900.0 281.4 L826.2 281.4 L784.7 297.0 L746.6 310.8 L660.0 316.0" fill="none" stroke="#e99d5c" stroke-width="1.6" stroke-linejoin="round"/>
<path d="M900.0 290.0 L833.2 286.6 L795.1 302.2 L757.0 312.6 L660.0 321.2" fill="none" stroke="#e99d5c" stroke-width="1.6" stroke-linejoin="round"/>
<path d="M900.0 297.0 L815.8 303.9 L767.4 314.3 L729.3 319.5 L660.0 324.7" fill="none" stroke="#e99d5c" stroke-width="1.6" stroke-linejoin="round"/>
<path d="M900.0 307.4 L833.2 310.8 L781.2 317.7 L711.9 321.2 L660.0 328.1" fill="none" stroke="#e99d5c" stroke-width="1.6" stroke-linejoin="round"/>
<path d="M750.0 371.9 L833.2 340.8 L864.3 342.5 L900.0 351.2" fill="none" stroke="#e99d5c" stroke-width="1.6" stroke-linejoin="round"/>
<path d="M763.9 377.1 L833.2 349.4 L864.3 351.2 L900.0 359.8" fill="none" stroke="#e99d5c" stroke-width="1.6" stroke-linejoin="round"/>
<path d="M777.7 387.5 L833.2 359.8 L860.9 361.6 L900.0 370.2" fill="none" stroke="#e99d5c" stroke-width="1.6" stroke-linejoin="round"/>
<path d="M795.1 392.7 L857.4 370.2 L900.0 378.9" fill="none" stroke="#e99d5c" stroke-width="1.6" stroke-linejoin="round"/>
<path d="M812.4 397.9 L857.4 382.3 L900.0 389.3" fill="none" stroke="#e99d5c" stroke-width="1.6" stroke-linejoin="round"/>
<path d="M627.0 412.6 L702.0 421.2 L788.6 414.0 L834.8 403.9" fill="none" stroke="#e99d5c" stroke-width="1.6" stroke-linejoin="round"/>
<path d="M629.9 406.8 L702.0 409.7 L788.6 406.8 L836.2 399.6" fill="none" stroke="#e99d5c" stroke-width="1.6" stroke-linejoin="round"/>
<path d="M638.5 398.1 L702.0 395.2 L788.6 401.0 L834.8 396.7" fill="none" stroke="#e99d5c" stroke-width="1.6" stroke-linejoin="round"/>
<path d="M650.1 386.6 L716.5 383.7 L803.0 395.2" fill="none" stroke="#e99d5c" stroke-width="1.6" stroke-linejoin="round"/>
<path d="M661.6 375.0 L730.9 375.0 L817.5 392.4" fill="none" stroke="#e99d5c" stroke-width="1.6" stroke-linejoin="round"/>
<path d="M635.6 421.2 L702.0 432.8 L754.0 429.9" fill="none" stroke="#e99d5c" stroke-width="1.6" stroke-linejoin="round"/>
<path d="M644.3 427.0 L678.9 438.5 L716.5 435.6" fill="none" stroke="#e99d5c" stroke-width="1.6" stroke-linejoin="round"/>
<path d="M670.3 372.2 L759.7 370.7 L831.9 393.8" fill="none" stroke="#e99d5c" stroke-width="1.6" stroke-linejoin="round"/>
<path d="M632.8 415.4 L702.0 427.0 L759.7 424.1 L817.5 409.7" fill="none" stroke="#e99d5c" stroke-width="1.6" stroke-linejoin="round"/>
<path d="M900.0 343.3 L863.6 340.4 L817.5 337.5 L759.7 328.9 L702.0 326.0 L661.6 326.0" fill="none" stroke="#e99d5c" stroke-width="1.6" stroke-linejoin="round"/>
<path d="M900.0 354.8 L863.6 350.5 L817.5 346.2 L774.2 343.3 L736.7 340.4 L661.6 331.7" fill="none" stroke="#e99d5c" stroke-width="1.6" stroke-linejoin="round"/>
<path d="M788.6 346.2 L745.3 351.9 L702.0 343.3 L673.2 334.6" fill="none" stroke="#e99d5c" stroke-width="1.6" stroke-linejoin="round"/>
<path d="M900.0 331.7 L817.5 328.9 L759.7 317.3 L702.0 311.5 L661.6 308.7" fill="none" stroke="#e99d5c" stroke-width="1.6" stroke-linejoin="round"/>
<path d="M661.6 340.4 L702.0 334.6 L759.7 337.5 L788.6 340.4" fill="none" stroke="#e99d5c" stroke-width="1.6" stroke-linejoin="round"/>
<path d="M500.0 386.6 L543.3 386.6 L586.6 375.0 L615.4 369.3" fill="none" stroke="#e99d5c" stroke-width="1.6" stroke-linejoin="round"/>
<path d="M500.0 395.2 L557.7 395.2 L595.2 386.6 L615.4 383.7" fill="none" stroke="#e99d5c" stroke-width="1.6" stroke-linejoin="round"/>
<path d="M500.0 403.9 L557.7 403.9 L601.0 395.2 L615.4 395.2" fill="none" stroke="#e99d5c" stroke-width="1.6" stroke-linejoin="round"/>
<path d="M621.2 418.3 L661.6 369.3 L716.5 366.4 L759.7 366.4 L837.7 395.2 L837.7 406.8 L788.6 415.4 L754.0 434.2 L716.5 437.1 L678.9 441.4 L621.2 418.3" fill="none" stroke="#e99d5c" stroke-width="1.7" stroke-linejoin="round"/>
<path d="M500.0 383.7 L557.7 375.0 L615.4 369.3" fill="none" stroke="#f2967a" stroke-width="3.5" stroke-linejoin="round"/>
<path d="M500.0 392.4 L557.7 386.6 L615.4 380.8" fill="none" stroke="#f2967a" stroke-width="3.5" stroke-linejoin="round"/>
<path d="M500.0 401.0 L557.7 398.1 L615.4 392.4" fill="none" stroke="#f2967a" stroke-width="3.5" stroke-linejoin="round"/>
<path d="M638.5 402.5 L702.0 401.0 L788.6 403.9 L834.8 398.1" fill="none" stroke="#f2967a" stroke-width="2.6" stroke-linejoin="round"/>
<path d="M644.3 392.4 L716.5 389.5 L803.0 398.1" fill="none" stroke="#f2967a" stroke-width="2.6" stroke-linejoin="round"/>
<path d="M635.6 416.9 L702.0 427.0 L788.6 411.1" fill="none" stroke="#f2967a" stroke-width="2.6" stroke-linejoin="round"/>
<path d="M345.0 356.0 L420.0 362.0 L478.0 381.0 L560.0 383.0 L612.0 374.0" fill="none" stroke="#d9804f" stroke-width="1.1" stroke-linejoin="round"/>
<path d="M360.0 362.0 L440.0 376.0 L500.0 389.0 L612.0 386.0" fill="none" stroke="#d9804f" stroke-width="1.1" stroke-linejoin="round"/>
<path d="M400.0 356.0 L450.0 368.0 L520.0 378.0 L600.0 370.0" fill="none" stroke="#d9804f" stroke-width="1.1" stroke-linejoin="round"/>
<path d="M440.0 392.0 L520.0 392.0 L612.0 398.0" fill="none" stroke="#d9804f" stroke-width="1.1" stroke-linejoin="round"/>
<path d="M545.0 402.0 L612.0 406.0" fill="none" stroke="#d9804f" stroke-width="1.1" stroke-linejoin="round"/>
<path d="M339.4 321.9 L345.0 353.8" fill="none" stroke="#f2967a" stroke-width="2.2" stroke-linejoin="round"/>
<path d="M345.0 322.9 L349.7 353.8" fill="none" stroke="#f2967a" stroke-width="2.2" stroke-linejoin="round"/>
<path d="M350.7 323.8 L355.4 353.8" fill="none" stroke="#f2967a" stroke-width="2.2" stroke-linejoin="round"/>
<path d="M356.3 324.7 L361.9 353.8" fill="none" stroke="#f2967a" stroke-width="2.2" stroke-linejoin="round"/>
<path d="M361.9 326.6 L368.5 353.8" fill="none" stroke="#f2967a" stroke-width="2.2" stroke-linejoin="round"/>
<path d="M367.6 329.0 L375.1 353.8" fill="none" stroke="#f2967a" stroke-width="2.2" stroke-linejoin="round"/>
<path d="M373.2 330.9 L382.6 353.8" fill="none" stroke="#f2967a" stroke-width="2.2" stroke-linejoin="round"/>
<path d="M379.8 333.2 L390.1 353.8" fill="none" stroke="#f2967a" stroke-width="2.2" stroke-linejoin="round"/>
<path d="M386.3 336.0 L397.6 353.8" fill="none" stroke="#f2967a" stroke-width="2.2" stroke-linejoin="round"/>
<path d="M288.8 289.1 L352.6 320.0 L401.3 350.1" fill="none" stroke="#d9804f" stroke-width="1.1" stroke-linejoin="round"/>
<path d="M294.4 288.1 L326.3 299.4 L354.4 316.3 L405.1 348.2" fill="none" stroke="#d9804f" stroke-width="1.1" stroke-linejoin="round"/>
<path d="M580.0 205.8 L675.9 217.8 L700.0 221.4" fill="none" stroke="#e99d5c" stroke-width="1.6" stroke-linejoin="round"/>
<path d="M580.0 210.6 L675.9 222.6 L700.0 225.0" fill="none" stroke="#e99d5c" stroke-width="1.6" stroke-linejoin="round"/>
<path d="M580.0 221.4 L673.5 229.8 L700.0 231.0" fill="none" stroke="#e99d5c" stroke-width="1.6" stroke-linejoin="round"/>
<path d="M580.0 232.2 L604.0 233.4 L663.9 239.4 L671.1 243.0" fill="none" stroke="#e99d5c" stroke-width="1.6" stroke-linejoin="round"/>
<path d="M606.4 249.6 L650.7 249.6 L679.5 253.8 L666.3 271.7 L636.4 277.7 L616.0 271.7 L608.8 262.1 L606.4 249.6" fill="none" stroke="#e99d5c" stroke-width="1.6" stroke-linejoin="round"/>
<path d="M613.6 251.4 L668.7 255.0 L656.7 270.5 L634.0 272.9 L618.4 266.9 L613.6 251.4" fill="none" stroke="#e99d5c" stroke-width="1.6" stroke-linejoin="round"/>
<path d="M620.8 252.6 L657.9 256.2 L647.1 266.9 L632.8 268.1 L623.2 262.1 L620.8 252.6" fill="none" stroke="#e99d5c" stroke-width="1.6" stroke-linejoin="round"/>
<path d="M626.8 255.0 L647.1 256.2 L642.4 262.1 L631.6 263.3 L626.8 255.0" fill="none" stroke="#e99d5c" stroke-width="1.6" stroke-linejoin="round"/>
<path d="M580.0 257.4 L594.4 256.2 L607.6 265.7 L580.0 271.7" fill="none" stroke="#e99d5c" stroke-width="1.6" stroke-linejoin="round"/>
<path d="M580.0 264.5 L594.4 266.9 L610.0 274.1 L592.0 278.9" fill="none" stroke="#e99d5c" stroke-width="1.6" stroke-linejoin="round"/>
<path d="M589.6 288.5 L612.4 276.5 L628.0 283.7 L613.6 293.3 L589.6 302.9" fill="none" stroke="#e99d5c" stroke-width="1.6" stroke-linejoin="round"/>
<path d="M592.0 290.9 L628.0 290.9 L663.9 296.9 L687.9 312.5 L651.9 319.7" fill="none" stroke="#e99d5c" stroke-width="1.6" stroke-linejoin="round"/>
<path d="M681.9 225.0 L700.0 231.0" fill="none" stroke="#e99d5c" stroke-width="1.6" stroke-linejoin="round"/>
<path d="M679.5 231.0 L693.9 240.6 L700.0 241.8" fill="none" stroke="#e99d5c" stroke-width="1.6" stroke-linejoin="round"/>
<path d="M683.1 262.1 L700.0 269.3" fill="none" stroke="#e99d5c" stroke-width="1.6" stroke-linejoin="round"/>
<path d="M684.3 269.3 L700.0 278.9" fill="none" stroke="#e99d5c" stroke-width="1.6" stroke-linejoin="round"/>
<path d="M610.0 293.3 L651.9 300.5 L700.0 310.1" fill="none" stroke="#f2967a" stroke-width="2.6" stroke-linejoin="round"/>
<path d="M616.0 300.5 L657.9 306.5 L700.0 316.1" fill="none" stroke="#f2967a" stroke-width="2.6" stroke-linejoin="round"/>
<path d="M606.4 251.4 L651.9 251.4 L678.3 254.4" fill="none" stroke="#f2967a" stroke-width="2.6" stroke-linejoin="round"/>
<path d="M270.0 264.1 L301.9 264.7 L307.5 278.8 L292.5 288.1" fill="none" stroke="#e99d5c" stroke-width="1.6" stroke-linejoin="round"/>
<path d="M270.0 271.3 L298.1 270.3 L305.6 280.6 L296.3 290.0" fill="none" stroke="#e99d5c" stroke-width="1.6" stroke-linejoin="round"/>
<path d="M270.0 278.8 L294.4 277.8 L300.0 286.3" fill="none" stroke="#e99d5c" stroke-width="1.6" stroke-linejoin="round"/>
<path d="M307.5 267.5 L328.2 288.1 L354.4 312.5 L358.2 321.9" fill="none" stroke="#e99d5c" stroke-width="1.6" stroke-linejoin="round"/>
<path d="M315.0 265.6 L333.8 282.5 L363.8 308.8 L367.6 321.9" fill="none" stroke="#e99d5c" stroke-width="1.6" stroke-linejoin="round"/>
<path d="M322.5 263.8 L341.3 278.8 L371.3 303.2 L376.9 320.0" fill="none" stroke="#e99d5c" stroke-width="1.6" stroke-linejoin="round"/>
<path d="M331.9 290.0 L363.8 290.0 L367.6 306.9 L354.4 320.0" fill="none" stroke="#e99d5c" stroke-width="1.6" stroke-linejoin="round"/>
<path d="M354.4 278.8 L382.6 301.3 L390.1 316.3 L375.1 327.5" fill="none" stroke="#e99d5c" stroke-width="1.6" stroke-linejoin="round"/>
<path d="M375.1 276.9 L401.3 297.5 L397.6 323.8 L386.3 331.3" fill="none" stroke="#e99d5c" stroke-width="1.6" stroke-linejoin="round"/>
<path d="M386.3 271.3 L412.6 288.1 L408.8 305.0 L401.3 321.9" fill="none" stroke="#e99d5c" stroke-width="1.6" stroke-linejoin="round"/>
<path d="M401.3 276.9 L429.5 271.3 L457.6 263.8" fill="none" stroke="#e99d5c" stroke-width="1.6" stroke-linejoin="round"/>
<path d="M412.6 288.1 L435.1 278.8 L476.4 267.5" fill="none" stroke="#e99d5c" stroke-width="1.6" stroke-linejoin="round"/>
<path d="M408.8 305.0 L438.9 288.1 L485.8 276.9 L530.0 269.4" fill="none" stroke="#e99d5c" stroke-width="1.6" stroke-linejoin="round"/>
<path d="M331.9 297.5 L350.7 297.5 L360.1 306.9 L348.8 316.3" fill="none" stroke="#e99d5c" stroke-width="1.6" stroke-linejoin="round"/>
<path d="M366.6 250.8 L409.9 250.1" fill="none" stroke="#8a3c9e" stroke-width="2" stroke-linejoin="round"/>
<path d="M409.9 250.1 L418.5 243.6 L438.7 241.4 L480.0 239.3" fill="none" stroke="#8a3c9e" stroke-width="2" stroke-linejoin="round"/>
<path d="M329.1 289.8 L381.0 279.7 L418.5 279.7 L431.5 286.9" fill="none" stroke="#8a3c9e" stroke-width="2" stroke-linejoin="round"/>
<path d="M104.9 295.2 L177.4 312.5 L177.4 343.6 L232.6 350.5 L302.0 363.6 L377.0 386.7 L426.0 366.0" fill="none" stroke="#8a3c9e" stroke-width="2" stroke-linejoin="round"/>
<path d="M104.9 295.2 L156.7 240.0 L183.7 255.3 L273.0 228.0 L307.8 223.6 L307.8 212.0 L365.5 199.0 L351.0 187.5 L343.9 177.4" fill="none" stroke="#8a3c9e" stroke-width="2" stroke-linejoin="round"/>
<path d="M860.0 246.5 L875.1 253.3 L898.4 258.8 L920.3 262.9 L972.4 267.0 L1028.6 273.9" fill="none" stroke="#8a3c9e" stroke-width="2" stroke-linejoin="round"/>
<path d="M860.0 286.2 L921.7 287.6 L909.4 323.2 L873.7 310.9 L860.0 309.5" fill="none" stroke="#8a3c9e" stroke-width="2" stroke-linejoin="round"/>
<path d="M864.1 342.4 L860.0 378.1" fill="none" stroke="#8a3c9e" stroke-width="2" stroke-linejoin="round"/>
<path d="M923.1 354.8 L982.0 364.4 L1027.3 347.9 L1008.1 316.4 L969.7 291.7 L920.3 262.9" fill="none" stroke="#8a3c9e" stroke-width="2" stroke-linejoin="round"/>
<path d="M923.1 354.8 L912.1 371.2 L939.5 387.7 L919.0 427.4 L868.2 421.9 L860.0 416.5" fill="none" stroke="#8a3c9e" stroke-width="2" stroke-linejoin="round"/>
<path d="M620.0 418.3 L680.6 440.5 L717.0 437.5 L733.1 432.4 L755.4 433.4 L789.7 415.3 L836.2 406.2 L868.5 421.3 L900.0 425.4" fill="none" stroke="#8a3c9e" stroke-width="2" stroke-linejoin="round"/>
<path d="M666.5 404.1 L745.3 416.3 L789.7 415.3" fill="none" stroke="#8a3c9e" stroke-width="2" stroke-linejoin="round"/>
<path d="M745.3 416.3 L733.1 432.4" fill="none" stroke="#8a3c9e" stroke-width="2" stroke-linejoin="round"/>
<path d="M390.0 377.5 L433.2 394.4 L470.7 392.5 L506.3 415.0 L542.0 422.5 L572.0 414.1 L588.9 421.6 L620.8 418.8 L650.0 433.8" fill="none" stroke="#8a3c9e" stroke-width="2" stroke-linejoin="round"/>
<path d="M470.7 392.5 L521.3 406.6 L572.0 414.1" fill="none" stroke="#8a3c9e" stroke-width="2" stroke-linejoin="round"/>
<path d="M521.3 406.6 L542.0 387.8 L588.9 379.4" fill="none" stroke="#8a3c9e" stroke-width="2" stroke-linejoin="round"/>
<path d="M470.0 194.9 L519.8 205.7 L586.2 207.3 L635.9 213.1 L700.0 223.1" fill="none" stroke="#8a3c9e" stroke-width="2" stroke-linejoin="round"/>
<path d="M616.0 269.6 L635.9 279.5 L657.5 286.2 L700.0 262.9" fill="none" stroke="#8a3c9e" stroke-width="2" stroke-linejoin="round"/>
<path d="M669.1 219.8 L685.7 239.7 L700.0 248.0" fill="none" stroke="#8a3c9e" stroke-width="2" stroke-linejoin="round"/>
<path d="M430.0 241.8 L460.7 239.3 L488.9 239.3 L518.3 224.6 L558.8 222.2 L600.0 225.9" fill="none" stroke="#8a3c9e" stroke-width="2" stroke-linejoin="round"/>
<path d="M518.3 224.6 L530.6 227.1 L552.7 239.3 L600.0 245.5" fill="none" stroke="#8a3c9e" stroke-width="2" stroke-linejoin="round"/>
<path d="M491.3 241.8 L493.8 256.5 L520.8 265.1 L533.0 278.6" fill="none" stroke="#8a3c9e" stroke-width="2" stroke-linejoin="round"/>
<path d="M430.0 268.8 L454.5 265.1 L488.9 239.3" fill="none" stroke="#8a3c9e" stroke-width="2" stroke-linejoin="round"/>
<path d="M474.2 271.2 L486.4 262.6 L493.8 256.5" fill="none" stroke="#8a3c9e" stroke-width="2" stroke-linejoin="round"/>
<path d="M430.0 288.4 L445.9 278.6 L474.2 271.2" fill="none" stroke="#8a3c9e" stroke-width="2" stroke-linejoin="round"/>
<path d="M660.0 239.8 L717.1 241.6 L753.5 246.8 L788.1 249.4 L815.8 245.0 L833.2 242.4 L860.9 245.9 L874.7 253.7 L900.0 258.9" fill="none" stroke="#8a3c9e" stroke-width="2" stroke-linejoin="round"/>
<path d="M751.8 257.1 L753.5 269.3 L772.6 267.5 L791.6 258.9 L807.2 246.8" fill="none" stroke="#8a3c9e" stroke-width="2" stroke-linejoin="round"/>
<path d="M812.4 303.9 L833.2 286.6 L900.0 286.6" fill="none" stroke="#8a3c9e" stroke-width="2" stroke-linejoin="round"/>
<path d="M812.4 303.9 L900.0 319.5" fill="none" stroke="#8a3c9e" stroke-width="2" stroke-linejoin="round"/>
<path d="M660.0 219.0 L711.9 226.0 L753.5 245.9" fill="none" stroke="#8a3c9e" stroke-width="2" stroke-linejoin="round"/>
<path d="M660.0 243.3 L694.6 245.0 L717.1 241.6" fill="none" stroke="#8a3c9e" stroke-width="2" stroke-linejoin="round"/>
<path d="M660.0 272.7 L680.8 265.8 L703.3 258.9 L757.0 257.1" fill="none" stroke="#8a3c9e" stroke-width="2" stroke-linejoin="round"/>
<path d="M660.0 297.0 L694.6 303.9" fill="none" stroke="#8a3c9e" stroke-width="2" stroke-linejoin="round"/>
<path d="M660.0 321.2 L711.9 317.7 L770.8 319.5 L833.2 321.2" fill="none" stroke="#8a3c9e" stroke-width="2" stroke-linejoin="round"/>
<path d="M812.4 320.0 L857.4 333.9 L864.3 342.5 L859.1 377.1 L855.7 389.3 L836.6 394.5 L836.6 406.6 L867.8 420.4 L900.0 423.9" fill="none" stroke="#8a3c9e" stroke-width="2" stroke-linejoin="round"/>
<path d="M660.0 354.6 L691.2 352.9" fill="none" stroke="#8a3c9e" stroke-width="2" stroke-linejoin="round"/>
<path d="M621.2 418.3 L661.6 369.3 L716.5 366.4 L759.7 366.4 L837.7 395.2 L837.7 406.8 L788.6 415.4 L754.0 434.2 L716.5 437.1 L678.9 441.4 L621.2 418.3" fill="none" stroke="#8a3c9e" stroke-width="2" stroke-linejoin="round"/>
<path d="M661.6 369.3 L702.0 383.7 L745.3 415.4 L788.6 415.4" fill="none" stroke="#8a3c9e" stroke-width="2" stroke-linejoin="round"/>
<path d="M678.9 441.4 L696.2 421.2" fill="none" stroke="#8a3c9e" stroke-width="2" stroke-linejoin="round"/>
<path d="M673.2 351.9 L702.0 351.9 L719.3 366.4 L742.4 366.4 L797.3 346.2 L857.9 334.6" fill="none" stroke="#8a3c9e" stroke-width="2" stroke-linejoin="round"/>
<path d="M580.0 226.2 L672.3 238.2 L678.3 252.6 L668.7 262.1 L654.3 283.7 L647.1 296.9 L640.0 308.9" fill="none" stroke="#8a3c9e" stroke-width="2" stroke-linejoin="round"/>
<path d="M580.0 245.4 L628.0 245.4 L649.5 249.0" fill="none" stroke="#8a3c9e" stroke-width="2" stroke-linejoin="round"/>
<path d="M612.4 269.3 L634.0 286.1 L656.7 289.7 L687.9 308.9" fill="none" stroke="#8a3c9e" stroke-width="2" stroke-linejoin="round"/>
<path d="M288.8 288.1 L331.9 320.0 L335.7 338.8 L339.4 355.7" fill="none" stroke="#8a3c9e" stroke-width="2" stroke-linejoin="round"/>
<path d="M330.0 288.1 L354.4 278.8 L401.3 276.9 L420.1 278.8" fill="none" stroke="#8a3c9e" stroke-width="2" stroke-linejoin="round"/>
<path d="M331.9 290.0 L388.2 301.3 L401.3 321.9 L423.8 325.7" fill="none" stroke="#8a3c9e" stroke-width="2" stroke-linejoin="round"/>
<path d="M354.4 278.8 L382.6 284.4 L397.6 299.4" fill="none" stroke="#8a3c9e" stroke-width="2" stroke-linejoin="round"/>
<path d="M318.8 344.4 L335.7 338.8" fill="none" stroke="#8a3c9e" stroke-width="2" stroke-linejoin="round"/>
<path d="M298.1 372.6 L337.5 353.8" fill="none" stroke="#8a3c9e" stroke-width="2" stroke-linejoin="round"/>
<circle cx="418.5" cy="243.6" r="1.7" fill="#111"/>
<circle cx="438.7" cy="241.4" r="1.7" fill="#111"/>
<circle cx="381.0" cy="279.7" r="1.7" fill="#111"/>
<circle cx="418.5" cy="279.7" r="1.7" fill="#111"/>
<circle cx="177.4" cy="312.5" r="1.7" fill="#111"/>
<circle cx="177.4" cy="343.6" r="1.7" fill="#111"/>
<circle cx="232.6" cy="350.5" r="1.7" fill="#111"/>
<circle cx="302.0" cy="363.6" r="1.7" fill="#111"/>
<circle cx="377.0" cy="386.7" r="1.7" fill="#111"/>
<circle cx="156.7" cy="240.0" r="1.7" fill="#111"/>
<circle cx="183.7" cy="255.3" r="1.7" fill="#111"/>
<circle cx="273.0" cy="228.0" r="1.7" fill="#111"/>
<circle cx="307.8" cy="223.6" r="1.7" fill="#111"/>
<circle cx="307.8" cy="212.0" r="1.7" fill="#111"/>
<circle cx="365.5" cy="199.0" r="1.7" fill="#111"/>
<circle cx="351.0" cy="187.5" r="1.7" fill="#111"/>
<circle cx="875.1" cy="253.3" r="1.7" fill="#111"/>
<circle cx="898.4" cy="258.8" r="1.7" fill="#111"/>
<circle cx="920.3" cy="262.9" r="1.7" fill="#111"/>
<circle cx="972.4" cy="267.0" r="1.7" fill="#111"/>
<circle cx="921.7" cy="287.6" r="1.7" fill="#111"/>
<circle cx="909.4" cy="323.2" r="1.7" fill="#111"/>
<circle cx="873.7" cy="310.9" r="1.7" fill="#111"/>
<circle cx="982.0" cy="364.4" r="1.7" fill="#111"/>
<circle cx="1027.3" cy="347.9" r="1.7" fill="#111"/>
<circle cx="1008.1" cy="316.4" r="1.7" fill="#111"/>
<circle cx="969.7" cy="291.7" r="1.7" fill="#111"/>
<circle cx="912.1" cy="371.2" r="1.7" fill="#111"/>
<circle cx="939.5" cy="387.7" r="1.7" fill="#111"/>
<circle cx="919.0" cy="427.4" r="1.7" fill="#111"/>
<circle cx="868.2" cy="421.9" r="1.7" fill="#111"/>
<circle cx="680.6" cy="440.5" r="1.7" fill="#111"/>
<circle cx="717.0" cy="437.5" r="1.7" fill="#111"/>
<circle cx="733.1" cy="432.4" r="1.7" fill="#111"/>
<circle cx="755.4" cy="433.4" r="1.7" fill="#111"/>
<circle cx="789.7" cy="415.3" r="1.7" fill="#111"/>
<circle cx="836.2" cy="406.2" r="1.7" fill="#111"/>
<circle cx="868.5" cy="421.3" r="1.7" fill="#111"/>
<circle cx="745.3" cy="416.3" r="1.7" fill="#111"/>
<circle cx="433.2" cy="394.4" r="1.7" fill="#111"/>
<circle cx="470.7" cy="392.5" r="1.7" fill="#111"/>
<circle cx="506.3" cy="415.0" r="1.7" fill="#111"/>
<circle cx="542.0" cy="422.5" r="1.7" fill="#111"/>
<circle cx="572.0" cy="414.1" r="1.7" fill="#111"/>
<circle cx="588.9" cy="421.6" r="1.7" fill="#111"/>
<circle cx="620.8" cy="418.8" r="1.7" fill="#111"/>
<circle cx="521.3" cy="406.6" r="1.7" fill="#111"/>
<circle cx="542.0" cy="387.8" r="1.7" fill="#111"/>
<circle cx="519.8" cy="205.7" r="1.7" fill="#111"/>
<circle cx="586.2" cy="207.3" r="1.7" fill="#111"/>
<circle cx="635.9" cy="213.1" r="1.7" fill="#111"/>
<circle cx="635.9" cy="279.5" r="1.7" fill="#111"/>
<circle cx="657.5" cy="286.2" r="1.7" fill="#111"/>
<circle cx="685.7" cy="239.7" r="1.7" fill="#111"/>
<circle cx="460.7" cy="239.3" r="1.7" fill="#111"/>
<circle cx="488.9" cy="239.3" r="1.7" fill="#111"/>
<circle cx="518.3" cy="224.6" r="1.7" fill="#111"/>
<circle cx="558.8" cy="222.2" r="1.7" fill="#111"/>
<circle cx="530.6" cy="227.1" r="1.7" fill="#111"/>
<circle cx="552.7" cy="239.3" r="1.7" fill="#111"/>
<circle cx="493.8" cy="256.5" r="1.7" fill="#111"/>
<circle cx="520.8" cy="265.1" r="1.7" fill="#111"/>
<circle cx="454.5" cy="265.1" r="1.7" fill="#111"/>
<circle cx="486.4" cy="262.6" r="1.7" fill="#111"/>
<circle cx="445.9" cy="278.6" r="1.7" fill="#111"/>
<circle cx="717.1" cy="241.6" r="1.7" fill="#111"/>
<circle cx="753.5" cy="246.8" r="1.7" fill="#111"/>
<circle cx="788.1" cy="249.4" r="1.7" fill="#111"/>
<circle cx="815.8" cy="245.0" r="1.7" fill="#111"/>
<circle cx="833.2" cy="242.4" r="1.7" fill="#111"/>
<circle cx="860.9" cy="245.9" r="1.7" fill="#111"/>
<circle cx="874.7" cy="253.7" r="1.7" fill="#111"/>
<circle cx="753.5" cy="269.3" r="1.7" fill="#111"/>
<circle cx="772.6" cy="267.5" r="1.7" fill="#111"/>
<circle cx="791.6" cy="258.9" r="1.7" fill="#111"/>
<circle cx="833.2" cy="286.6" r="1.7" fill="#111"/>
<circle cx="711.9" cy="226.0" r="1.7" fill="#111"/>
<circle cx="694.6" cy="245.0" r="1.7" fill="#111"/>
<circle cx="680.8" cy="265.8" r="1.7" fill="#111"/>
<circle cx="703.3" cy="258.9" r="1.7" fill="#111"/>
<circle cx="711.9" cy="317.7" r="1.7" fill="#111"/>
<circle cx="770.8" cy="319.5" r="1.7" fill="#111"/>
<circle cx="857.4" cy="333.9" r="1.7" fill="#111"/>
<circle cx="864.3" cy="342.5" r="1.7" fill="#111"/>
<circle cx="859.1" cy="377.1" r="1.7" fill="#111"/>
<circle cx="855.7" cy="389.3" r="1.7" fill="#111"/>
<circle cx="836.6" cy="394.5" r="1.7" fill="#111"/>
<circle cx="836.6" cy="406.6" r="1.7" fill="#111"/>
<circle cx="867.8" cy="420.4" r="1.7" fill="#111"/>
<circle cx="661.6" cy="369.3" r="1.7" fill="#111"/>
<circle cx="716.5" cy="366.4" r="1.7" fill="#111"/>
<circle cx="759.7" cy="366.4" r="1.7" fill="#111"/>
<circle cx="837.7" cy="395.2" r="1.7" fill="#111"/>
<circle cx="837.7" cy="406.8" r="1.7" fill="#111"/>
<circle cx="788.6" cy="415.4" r="1.7" fill="#111"/>
<circle cx="754.0" cy="434.2" r="1.7" fill="#111"/>
<circle cx="716.5" cy="437.1" r="1.7" fill="#111"/>
<circle cx="678.9" cy="441.4" r="1.7" fill="#111"/>
<circle cx="702.0" cy="383.7" r="1.7" fill="#111"/>
<circle cx="745.3" cy="415.4" r="1.7" fill="#111"/>
<circle cx="702.0" cy="351.9" r="1.7" fill="#111"/>
<circle cx="719.3" cy="366.4" r="1.7" fill="#111"/>
<circle cx="742.4" cy="366.4" r="1.7" fill="#111"/>
<circle cx="797.3" cy="346.2" r="1.7" fill="#111"/>
<circle cx="672.3" cy="238.2" r="1.7" fill="#111"/>
<circle cx="678.3" cy="252.6" r="1.7" fill="#111"/>
<circle cx="668.7" cy="262.1" r="1.7" fill="#111"/>
<circle cx="654.3" cy="283.7" r="1.7" fill="#111"/>
<circle cx="647.1" cy="296.9" r="1.7" fill="#111"/>
<circle cx="628.0" cy="245.4" r="1.7" fill="#111"/>
<circle cx="634.0" cy="286.1" r="1.7" fill="#111"/>
<circle cx="656.7" cy="289.7" r="1.7" fill="#111"/>
<circle cx="331.9" cy="320.0" r="1.7" fill="#111"/>
<circle cx="335.7" cy="338.8" r="1.7" fill="#111"/>
<circle cx="354.4" cy="278.8" r="1.7" fill="#111"/>
<circle cx="401.3" cy="276.9" r="1.7" fill="#111"/>
<circle cx="388.2" cy="301.3" r="1.7" fill="#111"/>
<circle cx="401.3" cy="321.9" r="1.7" fill="#111"/>
<circle cx="382.6" cy="284.4" r="1.7" fill="#111"/>
<circle cx="1038.2286811077597" cy="300.7430765012339" r="1.6" fill="#111"/>
<circle cx="1060.1645187825611" cy="297.1785028790787" r="1.6" fill="#111"/>
<circle cx="969.679188374006" cy="315.00137098985465" r="1.6" fill="#111"/>
<circle cx="980.6471072114066" cy="427.4225390732108" r="1.6" fill="#111"/>
<circle cx="599.5670995670996" cy="490.4761904761905" r="1.6" fill="#111"/>
<circle cx="608.2251082251082" cy="507.7922077922078" r="1.6" fill="#111"/>
<circle cx="755.4112554112554" cy="497.69119769119766" r="1.6" fill="#111"/>
<circle cx="295" cy="401" r="1.6" fill="#111"/>
<circle cx="458" cy="458" r="1.6" fill="#111"/>
<circle cx="598" cy="490" r="1.6" fill="#111"/>
<circle cx="608" cy="508" r="1.6" fill="#111"/>
<circle cx="906" cy="485" r="1.6" fill="#111"/>
<circle cx="1037" cy="299" r="1.6" fill="#111"/>
<circle cx="920" cy="401" r="1.6" fill="#111"/>
<circle cx="965" cy="393" r="1.6" fill="#111"/>
<circle cx="109" cy="295" r="1.6" fill="#111"/>
<circle cx="125" cy="318" r="1.6" fill="#111"/>
<circle cx="233" cy="352" r="1.6" fill="#111"/>
<circle cx="287" cy="183" r="1.6" fill="#111"/>
<circle cx="347" cy="178" r="1.6" fill="#111"/>
<circle cx="626" cy="142" r="1.6" fill="#111"/>
<circle cx="498" cy="152" r="1.6" fill="#111"/>
<circle cx="284" cy="181" r="1.6" fill="#111"/>
<circle cx="252" cy="241" r="1.6" fill="#111"/>
<circle cx="203" cy="312" r="1.6" fill="#111"/>
<circle cx="109" cy="266" r="1.6" fill="#111"/>
<circle cx="105" cy="320" r="1.6" fill="#111"/>
<circle cx="457" cy="196" r="1.6" fill="#111"/>
<circle cx="663" cy="276" r="1.6" fill="#111"/>
<circle cx="738" cy="248" r="1.6" fill="#111"/>
<circle cx="832" cy="243" r="1.6" fill="#111"/>
<path d="M328 451 L413 385" fill="none" stroke="#7a7a8a" stroke-width="1.8"/>
<path d="M413 385 L478 344 L557 313" fill="none" stroke="#7a7a8a" stroke-width="1.8"/>
<path d="M450 495 L615 422" fill="none" stroke="#7a7a8a" stroke-width="1.8"/>
<path d="M576 177 L700 195 L869 222" fill="none" stroke="#7a7a8a" stroke-width="1.8"/>
<path d="M703 200 L677 217 L650 240" fill="none" stroke="#7a7a8a" stroke-width="1.8"/>
<path d="M790 367 L764 377" fill="none" stroke="#7a7a8a" stroke-width="1.8"/>
<path d="M390 404 L409 389" fill="none" stroke="#7a7a8a" stroke-width="1.8"/>
</g>
<rect x="137" y="398" width="52" height="54" rx="10.8" fill="url(#ig)" stroke="#6b6b6b" stroke-width="2"/>
<path d="M138 419 H188" stroke="#1a1a1a" stroke-width="1.6"/><rect x="158.5" y="409" width="9" height="21" fill="#fff" stroke="#111" stroke-width="1.4"/><rect x="148" y="429.5" width="29.5" height="10.5" fill="#fff" stroke="#111" stroke-width="1.6"/>
<rect x="703" y="165" width="33" height="32" rx="7.0" fill="url(#ig)" stroke="#6b6b6b" stroke-width="2"/>
<path d="M703 185.7 H712.3 L724.2 174.4 H736" fill="none" stroke="#111" stroke-width="1.6"/>
<rect x="546" y="273" width="40" height="40" rx="8.4" fill="url(#ig)" stroke="#6b6b6b" stroke-width="2"/>
<path d="M552 293 A14 9 0 0 0 580 293 Z" fill="#fff"/><path d="M546 286.5 H555.5 L560 290.5 H575 L579.5 286.5 H586" fill="none" stroke="#111" stroke-width="1.5"/>
<rect x="617" y="318" width="42" height="41" rx="8.8" fill="url(#ig)" stroke="#6b6b6b" stroke-width="2"/>
<path d="M617 334 H659" stroke="#222" stroke-width="1.4"/><rect x="634" y="326" width="8.5" height="25.5" fill="#fff" stroke="#111" stroke-width="1.4"/>
<rect x="614" y="372" width="49" height="47" rx="10.200000000000001" fill="url(#ig)" stroke="#6b6b6b" stroke-width="2"/>
<path d="M621 396 A17 11 0 0 0 656 396 Z" fill="#fff"/><path d="M614 388.5 H625.5 L631 393 H650 L655.5 388.5 H663" fill="none" stroke="#111" stroke-width="1.6"/>
<path d="M110 183.55 L112.6 179 H123 V189.27 L120.4 192 H110 Z" fill="#e8960c"/><path d="M110 183.55 L112.6 179 H123 L120.4 183.55 Z" fill="#c67a08"/><path d="M120.4 183.55 L123 179 V189.27 L120.4 192 Z" fill="#a86406"/>
<path d="M845 125.2 L847.4 121 H857 V130.48 L854.6 133 H845 Z" fill="#e8960c"/><path d="M845 125.2 L847.4 121 H857 L854.6 125.2 Z" fill="#c67a08"/><path d="M854.6 125.2 L857 121 V130.48 L854.6 133 Z" fill="#a86406"/>
<path d="M1226 434.35 L1230.4 427 H1248 V443.59 L1243.6 448 H1226 Z" fill="#e8960c"/><path d="M1226 434.35 L1230.4 427 H1248 L1243.6 434.35 Z" fill="#c67a08"/><path d="M1243.6 434.35 L1248 427 V443.59 L1243.6 448 Z" fill="#a86406"/>
<path d="M1099 413.55 L1102.6 409 H1117 V419.27 L1113.4 422 H1099 Z" fill="#e8960c"/><path d="M1099 413.55 L1102.6 409 H1117 L1113.4 413.55 Z" fill="#c67a08"/><path d="M1113.4 413.55 L1117 409 V419.27 L1113.4 422 Z" fill="#a86406"/>
<path d="M69 614 L83 612 L92 664 L79 667 Z" fill="#e6e6e6"/>
<path d="M72 616 L80 664 M78 614 L86 662" stroke="#555" stroke-width="0.8" stroke-dasharray="2 2"/>
<ellipse cx="73.5" cy="633.5" rx="14.5" ry="6.5" fill="none" stroke="#26287a" stroke-width="5"/>
<path d="M70 629 L80 627 L83 640 L73 641Z" fill="#e6e6e6"/><path d="M72 629 L75 641 M78 627 L81 640" stroke="#555" stroke-width="0.8" stroke-dasharray="2 2"/>
<path d="M67 659 L100 653 L101 675 L68 678 Z" fill="#f2ee10"/>
<path d="M78 657 L90 655 L92 672 Q85 676 80 672 Z" fill="#e8e8e8"/>
<path d="M75 676 L108 671 L108 695 L76 699 Z" fill="#f2ee10"/>
<path d="M82 678 L97 676 Q98 690 90 691 Q83 690 82 678 Z" fill="#ececec"/>
<path d="M54 590 L58 587 H75 V611 L72 614 H54 Z" fill="#d98a0a"/><path d="M54 590 L58 587 H75 L72 597 H54Z" fill="#b87008"/>
<path d="M204 606 H214 L216 618 H226 V634 H200 V622 H206 Z" fill="#b8bcc0"/><path d="M204 606 H214 L216 634 H206Z" fill="#a6aaae"/>
<path d="M1222 455 Q1232 462 1244 458 L1246 450 Q1234 456 1224 449 Z" fill="#26287a"/>
<path d="M1226 446 H1242 L1244 456 H1226Z" fill="#e8e8e8"/>
<path d="M1218 460 L1244 457 L1244 465 L1222 468 Z" fill="#f2ee10"/>
<path d="M1210 472 L1232 468 Q1236 478 1244 476 L1242 484 L1216 486 Z" fill="#f2ee10"/>
<path d="M1224 462 H1236 V478 H1226Z" fill="#ececec"/>
<path d="M1226 434.35 L1230.4 427 H1248 V443.59 L1243.6 448 H1226 Z" fill="#e8960c"/><path d="M1226 434.35 L1230.4 427 H1248 L1243.6 434.35 Z" fill="#c67a08"/><path d="M1243.6 434.35 L1248 427 V443.59 L1243.6 448 Z" fill="#a86406"/>
<g fill="none" stroke="#eccd6a" stroke-width="1.1"><ellipse cx="159.6" cy="665.4" rx="3.2" ry="2.4"/><path d="M156.6 660.9 L161.6 666.9 M162.6 663.9 L172.6 661.4"/></g>
<g fill="none" stroke="#eccd6a" stroke-width="1.1"><ellipse cx="239.3" cy="646.5" rx="3.2" ry="2.4"/><path d="M236.3 642 L241.3 648 M242.3 645 L252.3 642.5"/></g>
<g fill="none" stroke="#eccd6a" stroke-width="1.1"><ellipse cx="309.7" cy="634.9" rx="3.2" ry="2.4"/><path d="M306.7 630.4 L311.7 636.4 M312.7 633.4 L322.7 630.9"/></g>
<g fill="none" stroke="#eccd6a" stroke-width="1.1"><ellipse cx="384.7" cy="618.5" rx="3.2" ry="2.4"/><path d="M381.7 614 L386.7 620 M387.7 617 L397.7 614.5"/></g>
<g fill="none" stroke="#eccd6a" stroke-width="1.1"><ellipse cx="450.4" cy="609.1" rx="3.2" ry="2.4"/><path d="M447.4 604.6 L452.4 610.6 M453.4 607.6 L463.4 605.1"/></g>
<g fill="none" stroke="#eccd6a" stroke-width="1.1"><ellipse cx="525.4" cy="595.0" rx="3.2" ry="2.4"/><path d="M522.4 590.5 L527.4 596.5 M528.4 593.5 L538.4 591.0"/></g>
<g fill="none" stroke="#eccd6a" stroke-width="1.1"><ellipse cx="586.4" cy="585.7" rx="3.2" ry="2.4"/><path d="M583.4 581.2 L588.4 587.2 M589.4 584.2 L599.4 581.7"/></g>
<g fill="none" stroke="#eccd6a" stroke-width="1.1"><ellipse cx="656.8" cy="571.5" rx="3.2" ry="2.4"/><path d="M653.8 567 L658.8 573 M659.8 570 L669.8 567.5"/></g>
<g fill="none" stroke="#eccd6a" stroke-width="1.1"><ellipse cx="717.4" cy="562.3" rx="3.2" ry="2.4"/><path d="M714.4 557.8 L719.4 563.8 M720.4 560.8 L730.4 558.3"/></g>
<g fill="none" stroke="#eccd6a" stroke-width="1.1"><ellipse cx="783.4" cy="546.9" rx="3.2" ry="2.4"/><path d="M780.4 542.4 L785.4 548.4 M786.4 545.4 L796.4 542.9"/></g>
<g fill="none" stroke="#eccd6a" stroke-width="1.1"><ellipse cx="840.7" cy="538.1" rx="3.2" ry="2.4"/><path d="M837.7 533.6 L842.7 539.6 M843.7 536.6 L853.7 534.1"/></g>
<g fill="none" stroke="#eccd6a" stroke-width="1.1"><ellipse cx="906.7" cy="524.9" rx="3.2" ry="2.4"/><path d="M903.7 520.4 L908.7 526.4 M909.7 523.4 L919.7 520.9"/></g>
<g fill="none" stroke="#eccd6a" stroke-width="1.1"><ellipse cx="959.5" cy="516.1" rx="3.2" ry="2.4"/><path d="M956.5 511.6 L961.5 517.6 M962.5 514.6 L972.5 512.1"/></g>
<g fill="none" stroke="#eccd6a" stroke-width="1.1"><ellipse cx="1025.5" cy="502.9" rx="3.2" ry="2.4"/><path d="M1022.5 498.4 L1027.5 504.4 M1028.5 501.4 L1038.5 498.9"/></g>
<g fill="none" stroke="#eccd6a" stroke-width="1.1"><ellipse cx="1074" cy="496.3" rx="3.2" ry="2.4"/><path d="M1071 491.8 L1076 497.8 M1077 494.8 L1087 492.3"/></g>
<g fill="none" stroke="#eccd6a" stroke-width="1.1"><ellipse cx="1135.6" cy="483.1" rx="3.2" ry="2.4"/><path d="M1132.6 478.6 L1137.6 484.6 M1138.6 481.6 L1148.6 479.1"/></g>
<g fill="none" stroke="#eccd6a" stroke-width="1.1"><ellipse cx="1184" cy="476.5" rx="3.2" ry="2.4"/><path d="M1181 472 L1186 478 M1187 475 L1197 472.5"/></g>
<text x="865" y="137" font-family="Liberation Sans" font-size="12" fill="#d040c0">3</text>
<text x="95" y="621" font-family="Liberation Sans" font-size="24" fill="#e020e0">4</text>
<text x="103" y="652" font-family="Liberation Sans" font-size="24.5" fill="#0a1870" textLength="62" lengthAdjust="spacingAndGlyphs">21,37</text>
<text x="116" y="693" font-family="Liberation Sans" font-size="24.5" fill="#0a1870" textLength="48" lengthAdjust="spacingAndGlyphs">8,00</text>
<path d="M123.5 786 L113 752 M123.5 786 L126.5 752 M123.5 786 L176 776" stroke="#e04040" stroke-width="1.5" fill="none"/>
<path d="M186 775 L170 769 L172 782 Z" fill="#e86060"/>
<path d="M113 746 L107 762 L118 760 Z" fill="#d01010"/>
<path d="M122 752 Q130 748 132 756 Q128 764 120 761 Z" fill="#e87070"/>
<text x="102" y="745" font-family="Liberation Sans" font-size="23" font-weight="bold" fill="#e02020" textLength="32" lengthAdjust="spacingAndGlyphs">ZY</text>
<text x="189" y="785" font-family="Liberation Sans" font-size="22" font-weight="bold" fill="#e02020">X</text>
</svg>
<div class="a" style="left:1252px;top:103px;width:1px;height:915px;background:#6a6a6a"></div>
<div class="a" style="left:0;top:817px;width:1252px;height:2px;background:#6a6a6a"></div>
<div class="a" style="left:1253px;top:104px;width:132px;height:913px;background:#f0f0f0"></div>
<div class="a" style="left:1256px;top:107px;width:126px;height:20px;background:#d4d4d4"></div>
<div class="t" style="left:1258px;top:110px;font-size:11px;color:#111">Frames</div>
<div class="a" style="left:1368px;top:119px;width:6px;height:2px;background:#000"></div>
<div class="a" style="left:1259px;top:356px;width:120px;height:21px;background:#c4dcf2;border:1px solid #aacbee"></div>
<svg class="a" style="left:1263px;top:133px" width="16" height="16" viewBox="0 0 16 16"><rect x="1" y="1" width="11" height="13" fill="#fff" stroke="#000" stroke-width="1.4"/><path d="M3 4H10M3 6.5H10M3 9H10M3 11.5H10" stroke="#000" stroke-width="1.2"/></svg>
<div class="t" style="left:1281px;top:134px;font-size:11px;color:#111">Project</div>
<div class="a" style="left:1261px;top:156px;width:116px;height:1px;background:#a0a0a0"></div>
<svg class="a" style="left:1263px;top:162px" width="16" height="16" viewBox="0 0 16 16"><path d="M1 8 L14 3 V14 H1Z" fill="#fff" stroke="#111" stroke-width="1"/><path d="M1 10.5 L14 7 M1 12.5 L14 10" stroke="#111" stroke-width="0.8"/></svg>
<div class="t" style="left:1281px;top:163px;font-size:11px;color:#111">Basic data</div>
<div class="a" style="left:1261px;top:184px;width:116px;height:1px;background:#a0a0a0"></div>
<svg class="a" style="left:1263px;top:191px" width="16" height="16" viewBox="0 0 16 16"><rect x="2" y="1" width="10" height="13" fill="#e8e020" stroke="#111" stroke-width="1.2"/><path d="M4 10 L10 4 M4 13 L11 6" stroke="#888820" stroke-width="0.8"/></svg>
<div class="t" style="left:1281px;top:192px;font-size:11px;color:#111">Soils</div>
<svg class="a" style="left:1263px;top:213px" width="16" height="16" viewBox="0 0 16 16"><rect x="2" y="1" width="10" height="13" fill="#e8e020" stroke="#111" stroke-width="1"/><rect x="2" y="1" width="10" height="4" fill="#1a6a6a"/><rect x="2" y="10" width="10" height="4" fill="#30d0d0"/></svg>
<div class="t" style="left:1281px;top:214px;font-size:11px;color:#111">Assign</div>
<div class="a" style="left:1261px;top:235px;width:116px;height:1px;background:#a0a0a0"></div>
<svg class="a" style="left:1263px;top:242px" width="16" height="16" viewBox="0 0 16 16"><path d="M1 1 L14 14 M14 1 L1 14" stroke="#333" stroke-width="0.8"/><circle cx="7.5" cy="7" r="2.6" fill="#fff" stroke="#000" stroke-width="1"/></svg>
<div class="t" style="left:1281px;top:243px;font-size:11px;color:#111">Points</div>
<svg class="a" style="left:1263px;top:264px" width="16" height="16" viewBox="0 0 16 16"><path d="M2.5 13 L12.5 3" stroke="#e020e0" stroke-width="1.8"/><circle cx="2.5" cy="13" r="1.8" fill="#fff" stroke="#000" stroke-width="0.9"/><circle cx="12.5" cy="2.8" r="1.8" fill="#fff" stroke="#000" stroke-width="0.9"/></svg>
<div class="t" style="left:1281px;top:265px;font-size:11px;color:#111">Edges</div>
<svg class="a" style="left:1263px;top:286px" width="16" height="16" viewBox="0 0 16 16"><rect x="1" y="2" width="4" height="12" fill="#333"/><rect x="4" y="3" width="10" height="11" fill="#20e0f0"/><path d="M4 3H14" stroke="#900" stroke-width="1.2"/><path d="M6 5.5H8M9.5 5.5H11.5" stroke="#006" stroke-width="1"/></svg>
<div class="t" style="left:1281px;top:287px;font-size:11px;color:#111">Water</div>
<svg class="a" style="left:1263px;top:308px" width="16" height="16" viewBox="0 0 16 16"><rect x="1.5" y="7" width="13" height="7" fill="none" stroke="#666" stroke-width="0.8" stroke-dasharray="1 1"/><path d="M1 7H14" stroke="#900" stroke-width="1"/><path d="M7.5 2V13" stroke="#e020e0" stroke-width="1.5"/><path d="M5.5 4 L7.5 1.5 L9.5 4" fill="none" stroke="#e020e0" stroke-width="1"/></svg>
<div class="t" style="left:1281px;top:309px;font-size:11px;color:#111">Bore holes</div>
<svg class="a" style="left:1263px;top:330px" width="16" height="16" viewBox="0 0 16 16"><path d="M1 13 V9 L4 6 H8 L11 10 H14 V13Z" fill="#fff" stroke="#aaa" stroke-width="1"/><path d="M3 9 L6 4 H9 L11 8" fill="none" stroke="#aaa" stroke-width="1"/></svg>
<div class="t" style="left:1281px;top:331px;font-size:11px;color:#a8a8a8">Earthwork</div>
<div class="a" style="left:1261px;top:352px;width:116px;height:1px;background:#a0a0a0"></div>
<svg class="a" style="left:1263px;top:359px" width="16" height="16" viewBox="0 0 16 16"><path d="M1 10 L8 14 L15 7 L8 3Z" fill="#fff" stroke="#111" stroke-width="1"/><path d="M1 8 L8 12 L15 5 L8 1Z" fill="#1a8a2a" stroke="#111" stroke-width="1"/></svg>
<div class="t" style="left:1281px;top:360px;font-size:11px;color:#111">Generate</div>
<div class="a" style="left:1261px;top:381px;width:116px;height:1px;background:#a0a0a0"></div>
<svg class="a" style="left:1263px;top:388px" width="16" height="16" viewBox="0 0 16 16"><rect x="1.5" y="7" width="13" height="7" fill="none" stroke="#666" stroke-width="0.8" stroke-dasharray="1 1"/><path d="M1 6H14" stroke="#900" stroke-width="1"/><path d="M7.5 3V14" stroke="#e020e0" stroke-width="2.5"/><path d="M4.5 3H10.5" stroke="#e020e0" stroke-width="1.6"/></svg>
<div class="t" style="left:1281px;top:389px;font-size:11px;color:#111">Point constructions</div>
<svg class="a" style="left:1263px;top:410px" width="16" height="16" viewBox="0 0 16 16"><rect x="1" y="7" width="14" height="7" fill="none" stroke="#666" stroke-width="0.8" stroke-dasharray="1 1"/><path d="M2 14V9 M4.5 14V8 M7 14V7 M9.5 14V6 M12 14V5" stroke="#e020e0" stroke-width="1.6"/><path d="M1 9 L14 4" stroke="#e020e0" stroke-width="1"/></svg>
<div class="t" style="left:1281px;top:411px;font-size:11px;color:#111">Line constructions</div>
<div class="a" style="left:1261px;top:432px;width:116px;height:1px;background:#a0a0a0"></div>
<svg class="a" style="left:1263px;top:439px" width="16" height="16" viewBox="0 0 16 16"><path d="M1.5 5.5H7.5V1.5L14 7.5L7.5 13.5V9.5H1.5Z" fill="#1a8a2a" stroke="#111" stroke-width="1"/></svg>
<div class="t" style="left:1281px;top:440px;font-size:11px;color:#111">Launch</div>
<div class="a" style="left:1261px;top:461px;width:116px;height:1px;background:#a0a0a0"></div>
<div class="a" style="left:1259px;top:738px;width:120px;height:80px;background:#c0dcc0"></div>
<div class="t" style="left:1259px;top:742px;width:120px;text-align:center;font-size:11px;color:#111;line-height:13px;white-space:normal">Model of terrain is<br>generated.</div>
<div class="a" style="left:1256px;top:821px;width:126px;height:20px;background:#d4d4d4"></div>
<div class="t" style="left:1258px;top:824px;font-size:11px;color:#111">Outputs</div>
<div class="a" style="left:1368px;top:833px;width:6px;height:2px;background:#000"></div>
<div class="pbtn" style="left:1259px;top:843px;width:120px;height:22px"></div>
<svg class="a" style="left:1263px;top:846px" width="16" height="16" viewBox="0 0 16 16"><rect x="0.5" y="1.5" width="14" height="14" fill="#fff" stroke="#333" stroke-width="1"/><path d="M4 4V13H9M4 4H7L8 6H4M4 8H9V13" fill="none" stroke="#111" stroke-width="1"/><path d="M11.5 1V7M8.5 4H14.5" stroke="#10a010" stroke-width="2"/></svg>
<div class="t" style="left:1281px;top:848px;font-size:11px;color:#111">Add picture</div>
<div class="t" style="left:1258px;top:871px;font-size:11px;color:#111">Generate :</div>
<div class="t" style="left:1370px;top:871px;font-size:11px;color:#111">0</div>
<div class="t" style="left:1258px;top:891px;font-size:11px;color:#111">Total :</div>
<div class="t" style="left:1370px;top:891px;font-size:11px;color:#111">0</div>
<div class="pbtn" style="left:1259px;top:909px;width:120px;height:21px"></div>
<svg class="a" style="left:1263px;top:912px" width="16" height="16" viewBox="0 0 16 16"><rect x="0.5" y="1.5" width="14" height="14" fill="#fff" stroke="#333" stroke-width="1"/><path d="M4 4V13H9M4 4H7L8 6H4M4 8H9V13" fill="none" stroke="#111" stroke-width="1"/><path d="M10 3.5H14M10 5.5H14M10 7.5H14" stroke="#111" stroke-width="1" stroke-dasharray="1 1"/></svg>
<div class="t" style="left:1281px;top:913px;font-size:11px;color:#111">List of pictures</div>
<div class="a" style="left:1261px;top:937px;width:116px;height:1px;background:#a0a0a0"></div>
<div class="pbtn" style="left:1259px;top:944px;width:57px;height:41px"></div>
<div class="pbtn" style="left:1322px;top:944px;width:57px;height:41px"></div>
<svg class="a" style="left:1274px;top:950px" width="29" height="30" viewBox="0 0 29 30"><rect x="6" y="1" width="17" height="9" fill="#fff" stroke="#111" stroke-width="1"/><rect x="1" y="8" width="27" height="13" rx="2" fill="#a08a60" stroke="#111" stroke-width="1.2"/><rect x="5" y="18" width="19" height="3" fill="#222"/><rect x="8" y="14" width="13" height="14" fill="#fff" stroke="#111" stroke-width="1"/><path d="M10 17H19M10 19H19M10 21H19M10 23H19M10 25H19" stroke="#111" stroke-width="0.9" stroke-dasharray="1.5 0.6"/></svg>
<svg class="a" style="left:1337px;top:950px" width="29" height="30" viewBox="0 0 29 30"><rect x="6" y="1" width="17" height="9" fill="#fff" stroke="#111" stroke-width="1"/><rect x="1" y="8" width="27" height="13" rx="2" fill="#a08a60" stroke="#111" stroke-width="1.2"/><rect x="5" y="18" width="19" height="3" fill="#222"/><rect x="8" y="14" width="13" height="14" fill="#fff" stroke="#111" stroke-width="1"/><path d="M11 17H18V25 M11 17V21 M14 20H18 M14 20V24" fill="none" stroke="#e02020" stroke-width="1.5"/></svg>
<div class="pbtn" style="left:1259px;top:989px;width:120px;height:21px"></div>
<svg class="a" style="left:1262px;top:991px" width="18" height="18" viewBox="0 0 18 18"><rect x="0.5" y="0.5" width="9" height="10" fill="#fff" stroke="#333" stroke-width="1"/><path d="M3 2.5V9H7V6H3M3 2.5H5.5L6.5 4" fill="none" stroke="#111" stroke-width="0.9"/><path d="M12 3V8M10.5 6.5L12 8.5L13.5 6.5" stroke="#10a010" stroke-width="1.4" fill="none"/><rect x="9.5" y="11" width="8" height="6" fill="#fff" stroke="#111" stroke-width="1"/><path d="M9.5 13.5H17.5" stroke="#111" stroke-width="1"/></svg>
<div class="t" style="left:1281px;top:993px;font-size:11px;color:#111">Copy view</div>
<svg class="a" style="left:1372px;top:1029px" width="12" height="12"><g fill="#b0b0b0"><rect x="8" y="0" width="2" height="2"/><rect x="4" y="4" width="2" height="2"/><rect x="8" y="4" width="2" height="2"/><rect x="0" y="8" width="2" height="2"/><rect x="4" y="8" width="2" height="2"/><rect x="8" y="8" width="2" height="2"/></g></svg>
<div class="a" style="left:1px;top:819px;width:1251px;height:198px;background:#f0f0f0"></div>
<div class="vtab" style="left:4px;top:825px;width:20px;height:188px"></div>
<div class="a" style="left:16px;top:835px;width:2px;height:5px;background:#000"></div>
<div class="vt" style="left:7px;top:1011px;font-size:11.5px">Generate</div>
<div class="a" style="left:33px;top:838px;width:8px;height:1px;background:#c8c8c8"></div>
<div class="a" style="left:158px;top:838px;width:99px;height:1px;background:#c8c8c8"></div>
<div class="t" style="left:43px;top:832px;font-size:11px;color:#111">Generation parameters</div>
<div class="a" style="left:33px;top:913px;width:8px;height:1px;background:#c8c8c8"></div>
<div class="a" style="left:87px;top:913px;width:170px;height:1px;background:#c8c8c8"></div>
<div class="t" style="left:43px;top:907px;font-size:11px;color:#111">Volumes</div>
<div class="t" style="left:38px;top:856px;font-size:11px;color:#111">Smoothing :</div>
<div class="a" style="left:147px;top:852px;width:104px;height:21px;background:#fff;border:1px solid #aaa"></div>
<div class="t" style="left:150px;top:857px;font-size:11px;color:#111">none</div>
<div class="a" style="left:233px;top:854px;width:16px;height:17px;background:#e0e0e0;border:1px solid #b8b8b8"></div>
<svg class="a" style="left:236px;top:860px" width="10" height="6"><path d="M0 0H9L4.5 5Z" fill="#111"/></svg>
<div class="t" style="left:38px;top:883px;font-size:11px;color:#111">Active edge :</div>
<div class="a" style="left:147px;top:878px;width:72px;height:20px;background:#fff;border:1px solid #aaa"></div>
<div class="t" style="left:196px;top:883px;font-size:11px;color:#111">0,0</div>
<div class="t" style="left:225px;top:883px;font-size:11px;color:#111">[%]</div>
<div class="a" style="left:39px;top:930px;width:12px;height:12px;background:#f4f4f4;border:1px solid #b8b8b8"></div>
<div class="t" style="left:56px;top:931px;font-size:11px;color:#9a9a9a">Calculate volumes</div>
<div class="t" style="left:38px;top:957px;font-size:11px;color:#9a9a9a">Analysis against stage:</div>
<div class="a" style="left:177px;top:953px;width:75px;height:21px;background:#f0f0f0;border:1px solid #c8c8c8"></div>
<div class="a" style="left:233px;top:955px;width:16px;height:17px;background:#dcdcdc;border:1px solid #c8c8c8"></div>
<svg class="a" style="left:236px;top:961px" width="10" height="6"><path d="M0 0H9L4.5 5Z" fill="#aaa"/></svg>
<div class="a" style="left:33px;top:981px;width:224px;height:1px;background:#c8c8c8"></div>
<div class="a" style="left:40px;top:989px;width:103px;height:21px;background:#e1e1e1;border:1px solid #adadad"></div>
<svg class="a" style="left:47px;top:993px" width="13" height="13"><rect x="0.5" y="0.5" width="12" height="12" fill="#fff" stroke="#1a1a6a" stroke-width="1"/><path d="M3.5 2.5 L10 6.5 L3.5 10.5Z" fill="#1a1a80"/></svg>
<div class="t" style="left:65px;top:993px;font-size:11px;color:#111">Generate</div>
<div class="a" style="left:151px;top:989px;width:103px;height:21px;background:#e1e1e1;border:1px solid #adadad"></div>
<svg class="a" style="left:158px;top:993px" width="13" height="13"><rect x="0.5" y="0.5" width="12" height="12" rx="2" fill="#fff" stroke="#8a1a1a" stroke-width="1.2"/><rect x="3" y="5" width="7" height="3" fill="#8a1a1a"/></svg>
<div class="t" style="left:176px;top:993px;font-size:11px;color:#111">Cancel model</div>
<div class="a" style="left:269px;top:832px;width:983px;height:164px;background:#fff;border-left:1px solid #a0a0a0;border-top:1px solid #a0a0a0"></div>
<div class="t" style="left:278px;top:837px;font-size:11.7px;font-weight:bold;color:#111">Model of terrain was successfully generated</div>
<div class="a" style="left:1px;top:1017px;width:1384px;height:1px;background:#d8d8d8"></div>
<div class="a" style="left:1px;top:1018px;width:1384px;height:24px;background:#f0f0f0"></div>
<div class="a" style="left:0;top:0;width:1386px;height:1px;background:#7a7a7a"></div>
<div class="a" style="left:0;top:0;width:1px;height:1043px;background:#5a5a5a"></div>
<div class="a" style="left:1385px;top:0;width:1px;height:1043px;background:#8a8a8a"></div>
<div class="a" style="left:0;top:1042px;width:1386px;height:1px;background:#8a8a8a"></div>
</div>
</body></html>
